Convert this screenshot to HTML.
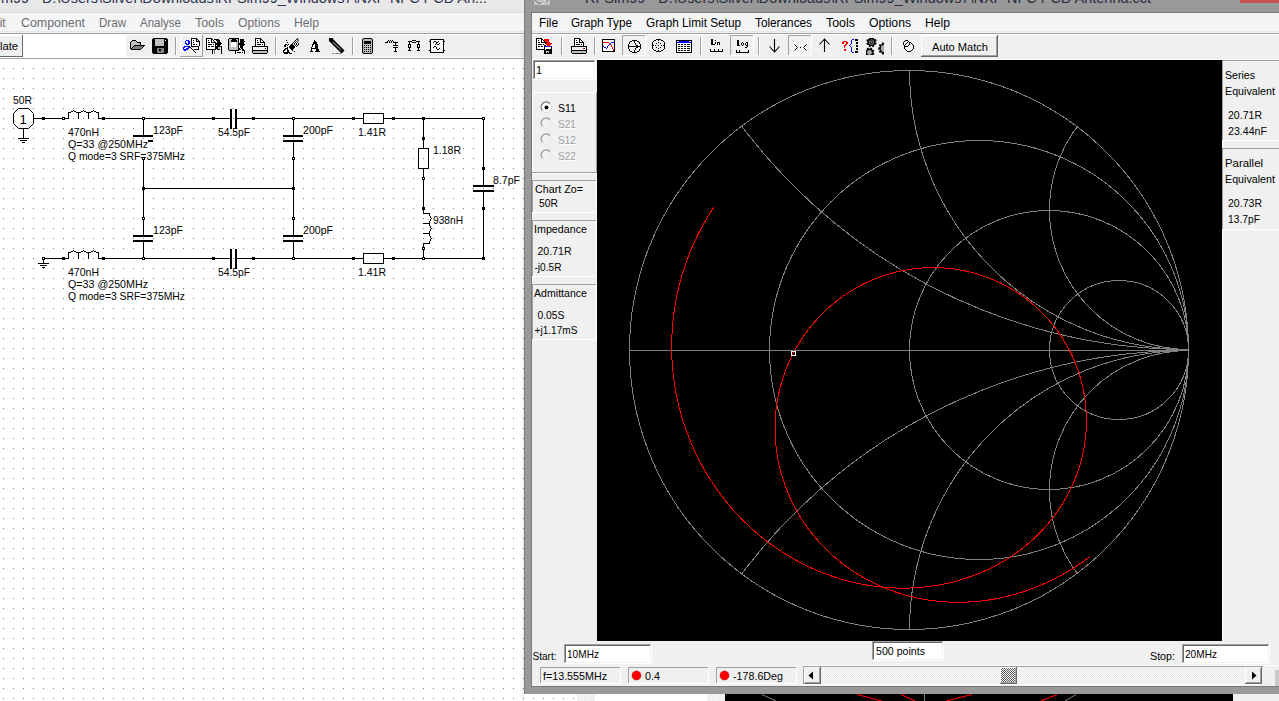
<!DOCTYPE html><html><head><meta charset="utf-8"><style>
html,body{margin:0;padding:0;background:#fff;overflow:hidden;width:1279px;height:701px}
svg{position:absolute;left:0;top:0;font-family:"Liberation Sans",sans-serif}
</style></head><body>
<svg width="1279" height="701" viewBox="0 0 1279 701">
<rect x="0" y="0" width="524" height="12" fill="#e8e8e8" />
<rect x="0" y="12" width="524" height="1" fill="#dcdcdc" />
<rect x="0" y="13" width="524" height="18" fill="#f4f5f7" />
<rect x="0" y="31" width="524" height="1" fill="#e6e6e6" />
<rect x="0" y="32" width="524" height="1" fill="#f0f0f0" />
<rect x="0" y="33" width="524" height="1" fill="#a0a0a0" />
<rect x="0" y="34" width="524" height="24" fill="#ffffff" />
<text x="1" y="3" font-size="15" fill="#2c3650" textLength="486" lengthAdjust="spacingAndGlyphs" >m99  -  D:\Users\Silver\Downloads\RFSim99_Windows7\NXP NFC PCD An...</text>
<text x="21" y="27" font-size="12" fill="#6d6d6d" textLength="64" lengthAdjust="spacingAndGlyphs" >Component</text>
<text x="99" y="27" font-size="12" fill="#6d6d6d" textLength="27" lengthAdjust="spacingAndGlyphs" >Draw</text>
<text x="140" y="27" font-size="12" fill="#6d6d6d" textLength="41" lengthAdjust="spacingAndGlyphs" >Analyse</text>
<text x="195" y="27" font-size="12" fill="#6d6d6d" textLength="29" lengthAdjust="spacingAndGlyphs" >Tools</text>
<text x="238" y="27" font-size="12" fill="#6d6d6d" textLength="42" lengthAdjust="spacingAndGlyphs" >Options</text>
<text x="294" y="27" font-size="12" fill="#6d6d6d" textLength="25" lengthAdjust="spacingAndGlyphs" >Help</text>
<text x="-15" y="27" font-size="12" fill="#6d6d6d" >Edit</text>
<rect x="0" y="35" width="23" height="22" fill="#f0f0f0" />
<rect x="0" y="35" width="23" height="1" fill="#ffffff" />
<rect x="22" y="35" width="1" height="22" fill="#696969" />
<rect x="0" y="56" width="23" height="1" fill="#696969" />
<text x="0" y="50" font-size="11" fill="#000" textLength="18" lengthAdjust="spacingAndGlyphs" >late</text>
<rect x="126" y="35" width="398" height="22" fill="#f0f0f0" />
<rect x="0" y="58" width="524" height="1" fill="#a0a0a0" />
<rect x="0" y="59" width="524" height="642" fill="#ffffff" />
<defs><pattern id="dots" x="3" y="8" width="10" height="10" patternUnits="userSpaceOnUse"><rect width="1" height="1" fill="#777"/></pattern></defs>
<defs><linearGradient id="shd" x1="0" x2="1" y1="0" y2="0"><stop offset="0" stop-color="#000" stop-opacity="0"/><stop offset="1" stop-color="#000" stop-opacity="0.06"/></linearGradient></defs>
<rect x="519" y="34" width="5" height="667" fill="url(#shd)" />
<rect x="0" y="59" width="524" height="642" fill="url(#dots)" />
<rect x="13" y="95" width="20" height="12" fill="#fff"/><rect x="68" y="127" width="32" height="12" fill="#fff"/><rect x="68" y="267" width="32" height="12" fill="#fff"/><rect x="68" y="279" width="81" height="12" fill="#fff"/><rect x="68" y="291" width="118" height="12" fill="#fff"/><rect x="153" y="125" width="31" height="12" fill="#fff"/><rect x="153" y="225" width="31" height="12" fill="#fff"/><rect x="218" y="127" width="33" height="12" fill="#fff"/><rect x="218" y="267" width="33" height="12" fill="#fff"/><rect x="303" y="125" width="31" height="12" fill="#fff"/><rect x="303" y="225" width="31" height="12" fill="#fff"/><rect x="358" y="127" width="29" height="12" fill="#fff"/><rect x="358" y="267" width="29" height="12" fill="#fff"/><rect x="433" y="145" width="29" height="12" fill="#fff"/><rect x="433" y="215" width="31" height="12" fill="#fff"/><rect x="493" y="175" width="28" height="12" fill="#fff"/>
<g fill="none" stroke="#000" stroke-width="1" shape-rendering="crispEdges">
<path d="M33 118.5H68" />
<path d="M98 118.5H230" />
<path d="M237 118.5H363" />
<path d="M383 118.5H484" />
<path d="M43 258.5H68" />
<path d="M98 258.5H230" />
<path d="M237 258.5H363" />
<path d="M383 258.5H484" />
</g>
<g fill="none" stroke="#000" stroke-width="1">
<path d="M18.5 108.5H28.5L33.5 113.5V123.5L28.5 128.5H18.5L13.5 123.5V113.5Z" />
</g>
<g fill="#000"><rect x="83" y="110" width="1" height="1"/><rect x="91" y="111" width="1" height="1"/><rect x="88" y="115" width="1" height="1"/><rect x="90" y="112" width="1" height="1"/><rect x="98" y="113" width="1" height="1"/><rect x="88" y="112" width="1" height="1"/><rect x="68" y="115" width="1" height="1"/><rect x="88" y="118" width="1" height="1"/><rect x="98" y="116" width="1" height="1"/><rect x="68" y="112" width="1" height="1"/><rect x="71" y="111" width="1" height="1"/><rect x="82" y="111" width="1" height="1"/><rect x="79" y="112" width="1" height="1"/><rect x="68" y="118" width="1" height="1"/><rect x="66" y="118" width="1" height="1"/><rect x="99" y="118" width="1" height="1"/><rect x="84" y="111" width="1" height="1"/><rect x="95" y="111" width="1" height="1"/><rect x="101" y="118" width="1" height="1"/><rect x="103" y="118" width="1" height="1"/><rect x="78" y="113" width="1" height="1"/><rect x="78" y="116" width="1" height="1"/><rect x="70" y="112" width="1" height="1"/><rect x="93" y="110" width="1" height="1"/><rect x="96" y="112" width="1" height="1"/><rect x="75" y="111" width="1" height="1"/><rect x="76" y="112" width="1" height="1"/><rect x="98" y="112" width="1" height="1"/><rect x="88" y="117" width="1" height="1"/><rect x="98" y="115" width="1" height="1"/><rect x="88" y="114" width="1" height="1"/><rect x="68" y="117" width="1" height="1"/><rect x="98" y="118" width="1" height="1"/><rect x="65" y="118" width="1" height="1"/><rect x="68" y="114" width="1" height="1"/><rect x="73" y="110" width="1" height="1"/><rect x="81" y="111" width="1" height="1"/><rect x="72" y="111" width="1" height="1"/><rect x="63" y="118" width="1" height="1"/><rect x="87" y="112" width="1" height="1"/><rect x="78" y="115" width="1" height="1"/><rect x="80" y="112" width="1" height="1"/><rect x="89" y="112" width="1" height="1"/><rect x="92" y="111" width="1" height="1"/><rect x="78" y="112" width="1" height="1"/><rect x="78" y="118" width="1" height="1"/><rect x="67" y="118" width="1" height="1"/><rect x="69" y="112" width="1" height="1"/><rect x="94" y="111" width="1" height="1"/><rect x="100" y="118" width="1" height="1"/><rect x="102" y="118" width="1" height="1"/><rect x="85" y="111" width="1" height="1"/><rect x="74" y="111" width="1" height="1"/><rect x="88" y="113" width="1" height="1"/><rect x="98" y="117" width="1" height="1"/><rect x="68" y="113" width="1" height="1"/><rect x="88" y="116" width="1" height="1"/><rect x="98" y="114" width="1" height="1"/><rect x="68" y="116" width="1" height="1"/><rect x="86" y="112" width="1" height="1"/><rect x="97" y="112" width="1" height="1"/><rect x="77" y="112" width="1" height="1"/><rect x="64" y="118" width="1" height="1"/><rect x="78" y="117" width="1" height="1"/><rect x="78" y="114" width="1" height="1"/></g>
<g fill="#000"><rect x="83" y="250" width="1" height="1"/><rect x="91" y="251" width="1" height="1"/><rect x="88" y="255" width="1" height="1"/><rect x="90" y="252" width="1" height="1"/><rect x="98" y="253" width="1" height="1"/><rect x="88" y="252" width="1" height="1"/><rect x="68" y="255" width="1" height="1"/><rect x="88" y="258" width="1" height="1"/><rect x="98" y="256" width="1" height="1"/><rect x="68" y="252" width="1" height="1"/><rect x="71" y="251" width="1" height="1"/><rect x="82" y="251" width="1" height="1"/><rect x="79" y="252" width="1" height="1"/><rect x="68" y="258" width="1" height="1"/><rect x="66" y="258" width="1" height="1"/><rect x="99" y="258" width="1" height="1"/><rect x="84" y="251" width="1" height="1"/><rect x="95" y="251" width="1" height="1"/><rect x="101" y="258" width="1" height="1"/><rect x="103" y="258" width="1" height="1"/><rect x="78" y="253" width="1" height="1"/><rect x="78" y="256" width="1" height="1"/><rect x="70" y="252" width="1" height="1"/><rect x="93" y="250" width="1" height="1"/><rect x="96" y="252" width="1" height="1"/><rect x="75" y="251" width="1" height="1"/><rect x="76" y="252" width="1" height="1"/><rect x="98" y="252" width="1" height="1"/><rect x="88" y="257" width="1" height="1"/><rect x="98" y="255" width="1" height="1"/><rect x="88" y="254" width="1" height="1"/><rect x="68" y="257" width="1" height="1"/><rect x="98" y="258" width="1" height="1"/><rect x="65" y="258" width="1" height="1"/><rect x="68" y="254" width="1" height="1"/><rect x="73" y="250" width="1" height="1"/><rect x="81" y="251" width="1" height="1"/><rect x="72" y="251" width="1" height="1"/><rect x="63" y="258" width="1" height="1"/><rect x="87" y="252" width="1" height="1"/><rect x="78" y="255" width="1" height="1"/><rect x="80" y="252" width="1" height="1"/><rect x="89" y="252" width="1" height="1"/><rect x="92" y="251" width="1" height="1"/><rect x="78" y="252" width="1" height="1"/><rect x="78" y="258" width="1" height="1"/><rect x="67" y="258" width="1" height="1"/><rect x="69" y="252" width="1" height="1"/><rect x="94" y="251" width="1" height="1"/><rect x="100" y="258" width="1" height="1"/><rect x="102" y="258" width="1" height="1"/><rect x="85" y="251" width="1" height="1"/><rect x="74" y="251" width="1" height="1"/><rect x="88" y="253" width="1" height="1"/><rect x="98" y="257" width="1" height="1"/><rect x="68" y="253" width="1" height="1"/><rect x="88" y="256" width="1" height="1"/><rect x="98" y="254" width="1" height="1"/><rect x="68" y="256" width="1" height="1"/><rect x="86" y="252" width="1" height="1"/><rect x="97" y="252" width="1" height="1"/><rect x="77" y="252" width="1" height="1"/><rect x="64" y="258" width="1" height="1"/><rect x="78" y="257" width="1" height="1"/><rect x="78" y="254" width="1" height="1"/></g>
<g fill="#000"><rect x="431" y="228" width="1" height="1"/><rect x="430" y="236" width="1" height="1"/><rect x="426" y="233" width="1" height="1"/><rect x="429" y="235" width="1" height="1"/><rect x="428" y="243" width="1" height="1"/><rect x="429" y="233" width="1" height="1"/><rect x="426" y="213" width="1" height="1"/><rect x="423" y="233" width="1" height="1"/><rect x="425" y="243" width="1" height="1"/><rect x="429" y="213" width="1" height="1"/><rect x="430" y="216" width="1" height="1"/><rect x="430" y="227" width="1" height="1"/><rect x="429" y="224" width="1" height="1"/><rect x="423" y="213" width="1" height="1"/><rect x="423" y="211" width="1" height="1"/><rect x="423" y="244" width="1" height="1"/><rect x="430" y="229" width="1" height="1"/><rect x="430" y="240" width="1" height="1"/><rect x="423" y="246" width="1" height="1"/><rect x="423" y="248" width="1" height="1"/><rect x="428" y="223" width="1" height="1"/><rect x="425" y="223" width="1" height="1"/><rect x="429" y="215" width="1" height="1"/><rect x="431" y="238" width="1" height="1"/><rect x="429" y="241" width="1" height="1"/><rect x="430" y="220" width="1" height="1"/><rect x="429" y="221" width="1" height="1"/><rect x="429" y="243" width="1" height="1"/><rect x="424" y="233" width="1" height="1"/><rect x="426" y="243" width="1" height="1"/><rect x="427" y="233" width="1" height="1"/><rect x="424" y="213" width="1" height="1"/><rect x="423" y="243" width="1" height="1"/><rect x="423" y="210" width="1" height="1"/><rect x="427" y="213" width="1" height="1"/><rect x="431" y="218" width="1" height="1"/><rect x="430" y="226" width="1" height="1"/><rect x="430" y="217" width="1" height="1"/><rect x="423" y="208" width="1" height="1"/><rect x="429" y="232" width="1" height="1"/><rect x="426" y="223" width="1" height="1"/><rect x="429" y="225" width="1" height="1"/><rect x="429" y="234" width="1" height="1"/><rect x="430" y="237" width="1" height="1"/><rect x="429" y="223" width="1" height="1"/><rect x="423" y="223" width="1" height="1"/><rect x="423" y="212" width="1" height="1"/><rect x="429" y="214" width="1" height="1"/><rect x="430" y="239" width="1" height="1"/><rect x="423" y="245" width="1" height="1"/><rect x="423" y="247" width="1" height="1"/><rect x="430" y="230" width="1" height="1"/><rect x="430" y="219" width="1" height="1"/><rect x="428" y="233" width="1" height="1"/><rect x="424" y="243" width="1" height="1"/><rect x="428" y="213" width="1" height="1"/><rect x="425" y="233" width="1" height="1"/><rect x="427" y="243" width="1" height="1"/><rect x="425" y="213" width="1" height="1"/><rect x="429" y="231" width="1" height="1"/><rect x="429" y="242" width="1" height="1"/><rect x="429" y="222" width="1" height="1"/><rect x="423" y="209" width="1" height="1"/><rect x="424" y="223" width="1" height="1"/><rect x="427" y="223" width="1" height="1"/></g>
<g fill="none" stroke="#000" stroke-width="1">
</g>
<g fill="none" stroke="#000" stroke-width="1" shape-rendering="crispEdges">
<path d="M23.5 128V138" />
<path d="M18 138.5H29" />
<path d="M20 140.5H27" />
<path d="M22 142.5H25" />
<path d="M43.5 258V263" />
<path d="M38 263.5H49" />
<path d="M40 265.5H47" />
<path d="M42 267.5H45" />
<path d="M143.5 118V135" />
<path d="M143.5 142V235" />
<path d="M143.5 242V258" />
<path d="M293.5 118V135" />
<path d="M293.5 142V235" />
<path d="M293.5 242V258" />
<path d="M143 188.5H294" />
<path d="M483.5 118V185" />
<path d="M483.5 192V258" />
<path d="M423.5 118V148" />
<path d="M423.5 168V208" />
<path d="M423.5 248V258" />
<path d="M363.5 113.5H383.5V123.5H363.5Z" />
<path d="M363.5 253.5H383.5V263.5H363.5Z" />
<path d="M418.5 148.5H428.5V168.5H418.5Z" />
</g>
<g fill="#000">
<rect x="133" y="135" width="20" height="2" fill="#000" />
<rect x="133" y="140" width="20" height="2" fill="#000" />
<rect x="133" y="235" width="20" height="2" fill="#000" />
<rect x="133" y="240" width="20" height="2" fill="#000" />
<rect x="283" y="135" width="20" height="2" fill="#000" />
<rect x="283" y="140" width="20" height="2" fill="#000" />
<rect x="283" y="235" width="20" height="2" fill="#000" />
<rect x="283" y="240" width="20" height="2" fill="#000" />
<rect x="473" y="185" width="21" height="2" fill="#000" />
<rect x="473" y="190" width="21" height="2" fill="#000" />
<rect x="230" y="109" width="2" height="20" fill="#000" />
<rect x="235" y="109" width="2" height="20" fill="#000" />
<rect x="230" y="249" width="2" height="20" fill="#000" />
<rect x="235" y="249" width="2" height="20" fill="#000" />
</g>
<rect x="42" y="117" width="3" height="3" fill="#000" />
<rect x="102" y="117" width="3" height="3" fill="#000" />
<rect x="212" y="117" width="3" height="3" fill="#000" />
<rect x="252" y="117" width="3" height="3" fill="#000" />
<rect x="352" y="117" width="3" height="3" fill="#000" />
<rect x="392" y="117" width="3" height="3" fill="#000" />
<rect x="422" y="117" width="3" height="3" fill="#000" />
<rect x="422" y="137" width="3" height="3" fill="#000" />
<rect x="482" y="167" width="3" height="3" fill="#000" />
<rect x="142" y="187" width="3" height="3" fill="#000" />
<rect x="292" y="187" width="3" height="3" fill="#000" />
<rect x="62" y="257" width="3" height="3" fill="#000" />
<rect x="102" y="257" width="3" height="3" fill="#000" />
<rect x="212" y="257" width="3" height="3" fill="#000" />
<rect x="252" y="257" width="3" height="3" fill="#000" />
<rect x="352" y="257" width="3" height="3" fill="#000" />
<rect x="392" y="257" width="3" height="3" fill="#000" />
<rect x="482" y="257" width="3" height="3" fill="#000" />
<rect x="482" y="207" width="3" height="3" fill="#000" />
<rect x="422" y="207" width="3" height="3" fill="#000" />
<rect x="62.5" y="117.5" width="2" height="2" fill="#fff" stroke="#000" stroke-width="1" shape-rendering="crispEdges"/>
<rect x="142.5" y="117.5" width="2" height="2" fill="#fff" stroke="#000" stroke-width="1" shape-rendering="crispEdges"/>
<rect x="292.5" y="117.5" width="2" height="2" fill="#fff" stroke="#000" stroke-width="1" shape-rendering="crispEdges"/>
<rect x="482.5" y="117.5" width="2" height="2" fill="#fff" stroke="#000" stroke-width="1" shape-rendering="crispEdges"/>
<rect x="142.5" y="157.5" width="2" height="2" fill="#fff" stroke="#000" stroke-width="1" shape-rendering="crispEdges"/>
<rect x="292.5" y="157.5" width="2" height="2" fill="#fff" stroke="#000" stroke-width="1" shape-rendering="crispEdges"/>
<rect x="422.5" y="177.5" width="2" height="2" fill="#fff" stroke="#000" stroke-width="1" shape-rendering="crispEdges"/>
<rect x="142.5" y="217.5" width="2" height="2" fill="#fff" stroke="#000" stroke-width="1" shape-rendering="crispEdges"/>
<rect x="292.5" y="217.5" width="2" height="2" fill="#fff" stroke="#000" stroke-width="1" shape-rendering="crispEdges"/>
<rect x="42.5" y="257.5" width="2" height="2" fill="#fff" stroke="#000" stroke-width="1" shape-rendering="crispEdges"/>
<rect x="142.5" y="257.5" width="2" height="2" fill="#fff" stroke="#000" stroke-width="1" shape-rendering="crispEdges"/>
<rect x="292.5" y="257.5" width="2" height="2" fill="#fff" stroke="#000" stroke-width="1" shape-rendering="crispEdges"/>
<rect x="422.5" y="257.5" width="2" height="2" fill="#fff" stroke="#000" stroke-width="1" shape-rendering="crispEdges"/>
<rect x="422.5" y="247.5" width="2" height="2" fill="#fff" stroke="#000" stroke-width="1" shape-rendering="crispEdges"/>
<text x="13" y="104" font-size="11" fill="#000" textLength="19" lengthAdjust="spacingAndGlyphs" >50R</text>
<text x="23" y="123.5" font-size="13" fill="#000" text-anchor="middle" >1</text>
<text x="68" y="136" font-size="11" fill="#000" textLength="31" lengthAdjust="spacingAndGlyphs" >470nH</text>
<rect x="68" y="139" width="80" height="12" fill="#fff" />
<text x="68" y="148" font-size="11" fill="#000" textLength="80" lengthAdjust="spacingAndGlyphs" >Q=33 @250MHz</text>
<rect x="68" y="151" width="117" height="12" fill="#fff" />
<text x="68" y="160" font-size="11" fill="#000" textLength="117" lengthAdjust="spacingAndGlyphs" >Q mode=3 SRF=375MHz</text>
<text x="68" y="276" font-size="11" fill="#000" textLength="31" lengthAdjust="spacingAndGlyphs" >470nH</text>
<text x="68" y="288" font-size="11" fill="#000" textLength="80" lengthAdjust="spacingAndGlyphs" >Q=33 @250MHz</text>
<text x="68" y="300" font-size="11" fill="#000" textLength="117" lengthAdjust="spacingAndGlyphs" >Q mode=3 SRF=375MHz</text>
<text x="153" y="134" font-size="11" fill="#000" textLength="30" lengthAdjust="spacingAndGlyphs" >123pF</text>
<text x="153" y="234" font-size="11" fill="#000" textLength="30" lengthAdjust="spacingAndGlyphs" >123pF</text>
<text x="218" y="136" font-size="11" fill="#000" textLength="32" lengthAdjust="spacingAndGlyphs" >54.5pF</text>
<text x="218" y="276" font-size="11" fill="#000" textLength="32" lengthAdjust="spacingAndGlyphs" >54.5pF</text>
<text x="303" y="134" font-size="11" fill="#000" textLength="30" lengthAdjust="spacingAndGlyphs" >200pF</text>
<text x="303" y="234" font-size="11" fill="#000" textLength="30" lengthAdjust="spacingAndGlyphs" >200pF</text>
<text x="358" y="136" font-size="11" fill="#000" textLength="28" lengthAdjust="spacingAndGlyphs" >1.41R</text>
<text x="358" y="276" font-size="11" fill="#000" textLength="28" lengthAdjust="spacingAndGlyphs" >1.41R</text>
<text x="433" y="154" font-size="11" fill="#000" textLength="28" lengthAdjust="spacingAndGlyphs" >1.18R</text>
<text x="433" y="224" font-size="11" fill="#000" textLength="30" lengthAdjust="spacingAndGlyphs" >938nH</text>
<text x="493" y="184" font-size="11" fill="#000" textLength="27" lengthAdjust="spacingAndGlyphs" >8.7pF</text>
<rect x="148" y="140" width="5" height="2" fill="#000" />
<rect x="143" y="159" width="1" height="29" fill="#000" />
<rect x="142.5" y="157.5" width="2" height="2" fill="#fff" stroke="#000" stroke-width="1" shape-rendering="crispEdges"/>
<rect x="524" y="0" width="755" height="694" fill="#999999" />
<rect x="524" y="0" width="1" height="694" fill="#7a7a7a" />
<rect x="531" y="12" width="1" height="674" fill="#7a7a7a" />
<rect x="531" y="686" width="748" height="1" fill="#7a7a7a" />
<rect x="524" y="694" width="755" height="0" fill="#999" />
<text x="585" y="3" font-size="15" fill="#262e40" textLength="566" lengthAdjust="spacingAndGlyphs" >RFSim99  -  D:\Users\Silver\Downloads\RFSim99_Windows7\NXP NFC PCD Antenna.cct</text>
<rect x="534" y="0" width="16" height="5" fill="#c4c4c4" />
<path d="M535 0Q538 4 541 3.5Q545 3 548 0" fill="none" stroke="#6a6a6a" stroke-width="1"/><path d="M541 4Q544 4 546 0" fill="none" stroke="#fff" stroke-width="1"/>
<rect x="1240" y="0" width="39" height="3" fill="#c75050" />
<rect x="532" y="12" width="747" height="19" fill="#f4f5f7" />
<rect x="531" y="12" width="748" height="1" fill="#7a7a7a" />
<rect x="532" y="31" width="747" height="1" fill="#e6e6e6" />
<rect x="532" y="32" width="747" height="1" fill="#f0f0f0" />
<rect x="532" y="33" width="747" height="1" fill="#a0a0a0" />
<text x="539" y="27" font-size="12" fill="#000" textLength="19" lengthAdjust="spacingAndGlyphs" >File</text>
<text x="571" y="27" font-size="12" fill="#000" textLength="61" lengthAdjust="spacingAndGlyphs" >Graph Type</text>
<text x="646" y="27" font-size="12" fill="#000" textLength="95" lengthAdjust="spacingAndGlyphs" >Graph Limit Setup</text>
<text x="755" y="27" font-size="12" fill="#000" textLength="57" lengthAdjust="spacingAndGlyphs" >Tolerances</text>
<text x="826" y="27" font-size="12" fill="#000" textLength="29" lengthAdjust="spacingAndGlyphs" >Tools</text>
<text x="869" y="27" font-size="12" fill="#000" textLength="42" lengthAdjust="spacingAndGlyphs" >Options</text>
<text x="925" y="27" font-size="12" fill="#000" textLength="25" lengthAdjust="spacingAndGlyphs" >Help</text>
<rect x="532" y="34" width="747" height="25" fill="#f0f0f0" />
<rect x="532" y="34" width="747" height="1" fill="#ffffff" />
<rect x="532" y="59" width="747" height="1" fill="#ffffff" />
<rect x="532" y="60" width="747" height="626" fill="#f0f0f0" />
<rect x="597" y="60" width="625" height="581" fill="#000" />
<defs><clipPath id="uc"><circle cx="909.0" cy="350.0" r="280.1"/></clipPath><clipPath id="ch"><rect x="597" y="60" width="625" height="581"/></clipPath></defs>
<g clip-path="url(#ch)">
<g fill="none" stroke="#808080" stroke-width="1" shape-rendering="crispEdges">
<circle cx="909" cy="350" r="279.5"/>
<path d="M629 350.5H1189" shape-rendering="crispEdges"/>
<circle cx="979" cy="350" r="209.5"/>
<circle cx="1049" cy="350" r="139.5"/>
<circle cx="1119" cy="350" r="69.5"/>
<g clip-path="url(#uc)">
<circle cx="1189" cy="-210" r="559.5"/>
<circle cx="1189" cy="910" r="559.5"/>
<circle cx="1189" cy="70" r="279.5"/>
<circle cx="1189" cy="630" r="279.5"/>
<circle cx="1189" cy="210" r="139.5"/>
<circle cx="1189" cy="490" r="139.5"/>
</g></g>
<polyline points="1089.32,557.04 1088.51,557.65 1087.69,558.26 1086.87,558.86 1086.04,559.47 1085.20,560.08 1084.35,560.69 1083.49,561.30 1082.63,561.91 1081.75,562.52 1080.87,563.13 1079.98,563.74 1079.08,564.34 1078.18,564.95 1077.26,565.56 1076.34,566.17 1075.40,566.77 1074.46,567.38 1073.51,567.99 1072.55,568.59 1071.58,569.20 1070.59,569.80 1069.60,570.40 1068.60,571.01 1067.59,571.61 1066.57,572.21 1065.54,572.81 1064.50,573.40 1063.45,574.00 1062.39,574.60 1061.32,575.19 1060.23,575.78 1059.14,576.37 1058.03,576.96 1056.91,577.55 1055.79,578.13 1054.64,578.72 1053.49,579.30 1052.33,579.88 1051.15,580.45 1049.96,581.03 1048.76,581.60 1047.54,582.17 1046.32,582.73 1045.08,583.29 1043.82,583.85 1042.55,584.41 1041.27,584.96 1039.98,585.51 1038.67,586.05 1037.35,586.60 1036.01,587.13 1034.66,587.66 1033.29,588.19 1031.91,588.71 1030.51,589.23 1029.10,589.75 1027.67,590.25 1026.23,590.75 1024.76,591.25 1023.29,591.74 1021.79,592.22 1020.28,592.70 1018.76,593.17 1017.21,593.63 1015.65,594.09 1014.07,594.54 1012.47,594.98 1010.85,595.41 1009.22,595.83 1007.56,596.24 1005.89,596.65 1004.20,597.04 1002.48,597.42 1000.75,597.80 999.00,598.16 997.22,598.51 995.43,598.85 993.61,599.17 991.78,599.49 989.92,599.79 988.04,600.07 986.14,600.34 984.21,600.60 982.26,600.84 980.29,601.06 978.29,601.27 976.28,601.46 974.23,601.64 972.16,601.79 970.07,601.92 967.96,602.04 965.81,602.13 963.64,602.20 961.45,602.25 959.23,602.27 956.98,602.27 954.71,602.24 952.41,602.19 950.08,602.11 947.73,602.00 945.35,601.86 942.94,601.69 940.50,601.49 938.03,601.25 935.54,600.98 933.01,600.68 930.46,600.33 927.88,599.95 925.27,599.53 922.63,599.06 919.96,598.55 917.27,598.00 914.54,597.40 911.79,596.75 909.00,596.05 906.19,595.30 903.35,594.49 900.48,593.63 897.59,592.71 894.67,591.73 891.72,590.68 888.75,589.57 885.75,588.39 882.73,587.14 879.68,585.81 876.61,584.41 873.52,582.93 870.41,581.37 867.29,579.72 864.14,577.99 860.98,576.17 857.81,574.25 854.63,572.23 851.43,570.12 848.24,567.90 845.04,565.57 841.84,563.14 838.64,560.59 835.45,557.92 832.27,555.13 829.10,552.22 825.95,549.17 822.83,546.00 819.74,542.69 816.68,539.25 813.66,535.66 810.69,531.93 807.77,528.05 804.92,524.02 802.13,519.83 799.43,515.50 796.81,511.00 794.28,506.35 791.86,501.54 789.55,496.57 787.37,491.44 785.32,486.15 783.42,480.71 781.69,475.11 780.12,469.35 778.74,463.45 777.55,457.40 776.58,451.21 775.83,444.89 775.31,438.44 775.04,431.88 775.04,425.22 775.31,418.46 775.87,411.62 776.72,404.71 777.89,397.75 779.38,390.76 781.20,383.75 783.35,376.74 785.85,369.76 788.70,362.82 791.91,355.96 795.47,349.18 799.38,342.52 803.65,336.00 808.27,329.65 813.23,323.49 818.52,317.54 824.14,311.83 830.07,306.39 836.29,301.23 842.79,296.38 849.55,291.86 856.55,287.69 863.75,283.87 871.15,280.44 878.71,277.40 886.41,274.76 894.22,272.52 902.11,270.70 910.05,269.30 918.01,268.31 925.98,267.74 933.91,267.58 941.79,267.82 949.58,268.45 957.28,269.47 964.84,270.86 972.25,272.61 979.50,274.70 986.56,277.11 993.43,279.83 1000.07,282.84 1006.49,286.13 1012.67,289.66 1018.61,293.43 1024.29,297.42 1029.71,301.60 1034.87,305.95 1039.76,310.47 1044.39,315.12 1048.75,319.90 1052.85,324.79 1056.68,329.77 1060.25,334.83 1063.56,339.95 1066.63,345.12 1069.44,350.32 1072.01,355.56 1074.35,360.80 1076.46,366.05 1078.34,371.30 1080.01,376.53 1081.46,381.74 1082.72,386.92 1083.78,392.07 1084.65,397.17 1085.34,402.23 1085.85,407.24 1086.20,412.19 1086.39,417.08 1086.42,421.91 1086.30,426.67 1086.04,431.36 1085.65,435.99 1085.12,440.54 1084.47,445.01 1083.70,449.41 1082.82,453.74 1081.83,457.98 1080.74,462.15 1079.54,466.24 1078.25,470.25 1076.88,474.18 1075.41,478.04 1073.87,481.81 1072.24,485.51 1070.55,489.13 1068.78,492.66 1066.94,496.13 1065.04,499.51 1063.08,502.82 1061.06,506.05 1058.98,509.21 1056.85,512.30 1054.67,515.31 1052.44,518.24 1050.16,521.11 1047.84,523.91 1045.48,526.63 1043.08,529.28 1040.64,531.87 1038.16,534.39 1035.65,536.84 1033.11,539.22 1030.53,541.54 1027.93,543.80 1025.29,545.99 1022.63,548.12 1019.95,550.18 1017.23,552.18 1014.50,554.12 1011.74,556.00 1008.96,557.83 1006.16,559.59 1003.35,561.29 1000.51,562.94 997.65,564.53 994.78,566.06 991.90,567.54 989.00,568.96 986.08,570.32 983.15,571.64 980.21,572.89 977.26,574.10 974.30,575.25 971.32,576.35 968.34,577.40 965.35,578.40 962.34,579.34 959.34,580.24 956.32,581.08 953.30,581.88 950.27,582.62 947.23,583.32 944.19,583.97 941.15,584.57 938.10,585.12 935.05,585.63 931.99,586.08 928.94,586.49 925.88,586.86 922.82,587.18 919.75,587.45 916.69,587.67 913.63,587.85 910.57,587.99 907.51,588.08 904.45,588.12 901.40,588.12 898.34,588.08 895.29,587.99 892.24,587.86 889.20,587.69 886.16,587.47 883.13,587.21 880.10,586.90 877.07,586.56 874.06,586.17 871.05,585.74 868.04,585.27 865.05,584.75 862.06,584.20 859.08,583.60 856.11,582.96 853.15,582.28 850.20,581.56 847.26,580.81 844.33,580.01 841.41,579.17 838.50,578.29 835.61,577.37 832.72,576.42 829.85,575.42 827.00,574.39 824.16,573.31 821.33,572.20 818.52,571.06 815.72,569.87 812.94,568.65 810.18,567.39 807.43,566.09 804.70,564.76 801.99,563.39 799.30,561.99 796.62,560.55 793.96,559.08 791.33,557.57 788.71,556.03 786.11,554.45 783.54,552.84 780.98,551.19 778.45,549.52 775.94,547.81 773.45,546.06 770.99,544.29 768.54,542.48 766.13,540.65 763.73,538.78 761.36,536.88 759.02,534.96 756.70,533.00 754.41,531.01 752.14,529.00 749.90,526.95 747.68,524.88 745.50,522.78 743.34,520.66 741.21,518.51 739.10,516.33 737.03,514.13 734.98,511.90 732.96,509.65 730.98,507.37 729.02,505.07 727.09,502.75 725.20,500.40 723.33,498.03 721.49,495.64 719.69,493.23 717.92,490.80 716.18,488.35 714.47,485.88 712.79,483.39 711.14,480.88 709.53,478.36 707.95,475.81 706.40,473.26 704.89,470.68 703.41,468.09 701.96,465.48 700.55,462.86 699.17,460.23 697.82,457.58 696.51,454.92 695.23,452.24 693.98,449.56 692.77,446.86 691.60,444.15 690.45,441.44 689.34,438.71 688.27,435.97 687.23,433.23 686.23,430.48 685.25,427.72 684.32,424.95 683.41,422.18 682.55,419.40 681.71,416.62 680.91,413.83 680.15,411.04 679.42,408.24 678.72,405.44 678.05,402.64 677.42,399.84 676.83,397.04 676.26,394.23 675.73,391.43 675.24,388.62 674.78,385.82 674.35,383.01 673.95,380.21 673.58,377.41 673.25,374.62 672.95,371.82 672.69,369.03 672.45,366.25 672.25,363.47 672.07,360.69 671.93,357.92 671.82,355.15 671.74,352.39 671.69,349.64 671.68,346.90 671.69,344.16 671.73,341.43 671.80,338.71 671.90,336.00 672.03,333.29 672.19,330.60 672.37,327.92 672.59,325.24 672.83,322.58 673.10,319.93 673.39,317.29 673.72,314.66 674.07,312.04 674.44,309.44 674.85,306.84 675.27,304.26 675.73,301.70 676.20,299.14 676.71,296.60 677.23,294.08 677.78,291.57 678.36,289.07 678.96,286.59 679.58,284.12 680.22,281.67 680.88,279.23 681.57,276.81 682.28,274.40 683.01,272.01 683.76,269.64 684.53,267.28 685.32,264.94 686.13,262.62 686.96,260.31 687.81,258.02 688.67,255.75 689.56,253.49 690.46,251.25 691.38,249.03 692.32,246.83 693.28,244.65 694.25,242.48 695.24,240.33 696.24,238.20 697.26,236.08 698.29,233.99 699.34,231.91 700.41,229.85 701.49,227.81 702.58,225.79 703.68,223.79 704.80,221.80 705.94,219.83 707.08,217.89 708.24,215.96 709.40,214.05 710.58,212.15 711.78,210.28 712.98,208.42 714.19,206.59" fill="none" stroke="#ff0000" stroke-width="1" shape-rendering="crispEdges"/>
<rect x="791.5" y="351.5" width="4" height="4" fill="none" stroke="#fff" stroke-width="1" shape-rendering="crispEdges"/>
</g>
<rect x="533" y="60" width="63" height="20" fill="#fff" />
<rect x="533" y="60" width="63" height="1" fill="#a0a0a0" />
<rect x="533" y="60" width="1" height="20" fill="#a0a0a0" />
<rect x="534" y="61" width="61" height="1" fill="#696969" />
<rect x="534" y="61" width="1" height="18" fill="#696969" />
<rect x="533" y="79" width="63" height="1" fill="#ffffff" />
<rect x="595" y="60" width="1" height="20" fill="#ffffff" />
<rect x="534" y="78" width="61" height="1" fill="#f0f0f0" />
<rect x="594" y="61" width="1" height="18" fill="#f0f0f0" />
<text x="536" y="74" font-size="11" fill="#000" >1</text>
<rect x="532" y="92" width="65" height="1" fill="#ffffff" />
<rect x="532" y="92" width="1" height="81" fill="#ffffff" />
<rect x="532" y="172" width="65" height="1" fill="#a0a0a0" />
<rect x="596" y="92" width="1" height="81" fill="#a0a0a0" />
<rect x="532" y="173" width="65" height="1" fill="#ffffff" />
<circle cx="546.5" cy="107.5" r="5" fill="#fff" stroke="#dcdcdc" stroke-width="1"/>
<path d="M542.5 110.5A5 5 0 0 1 550 103.5" fill="none" stroke="#808080" stroke-width="1.2"/>
<circle cx="546.5" cy="107.5" r="2" fill="#000"/>
<text x="558" y="112" font-size="11" fill="#000" textLength="18" lengthAdjust="spacingAndGlyphs" >S11</text>
<circle cx="546.5" cy="123.5" r="5" fill="#f0f0f0" stroke="#e8e8e8" stroke-width="1"/>
<path d="M542.5 126.5A5 5 0 0 1 550 119.5" fill="none" stroke="#9a9a9a" stroke-width="1.2"/>
<text x="559" y="129" font-size="11" fill="#ffffff" textLength="18" lengthAdjust="spacingAndGlyphs" >S21</text>
<text x="558" y="128" font-size="11" fill="#a0a0a0" textLength="18" lengthAdjust="spacingAndGlyphs" >S21</text>
<circle cx="546.5" cy="139.5" r="5" fill="#f0f0f0" stroke="#e8e8e8" stroke-width="1"/>
<path d="M542.5 142.5A5 5 0 0 1 550 135.5" fill="none" stroke="#9a9a9a" stroke-width="1.2"/>
<text x="559" y="145" font-size="11" fill="#ffffff" textLength="18" lengthAdjust="spacingAndGlyphs" >S12</text>
<text x="558" y="144" font-size="11" fill="#a0a0a0" textLength="18" lengthAdjust="spacingAndGlyphs" >S12</text>
<circle cx="546.5" cy="155.5" r="5" fill="#f0f0f0" stroke="#e8e8e8" stroke-width="1"/>
<path d="M542.5 158.5A5 5 0 0 1 550 151.5" fill="none" stroke="#9a9a9a" stroke-width="1.2"/>
<text x="559" y="161" font-size="11" fill="#ffffff" textLength="18" lengthAdjust="spacingAndGlyphs" >S22</text>
<text x="558" y="160" font-size="11" fill="#a0a0a0" textLength="18" lengthAdjust="spacingAndGlyphs" >S22</text>
<rect x="532" y="180" width="65" height="1" fill="#a0a0a0" />
<rect x="532" y="180" width="1" height="33" fill="#a0a0a0" />
<rect x="532" y="212" width="65" height="1" fill="#ffffff" />
<rect x="596" y="180" width="1" height="33" fill="#ffffff" />
<text x="535" y="193" font-size="11" fill="#000" textLength="48" lengthAdjust="spacingAndGlyphs" >Chart Zo=</text>
<text x="539" y="207" font-size="11" fill="#000" textLength="19" lengthAdjust="spacingAndGlyphs" >50R</text>
<rect x="532" y="220" width="65" height="1" fill="#a0a0a0" />
<rect x="532" y="220" width="1" height="57" fill="#a0a0a0" />
<rect x="532" y="276" width="65" height="1" fill="#ffffff" />
<rect x="596" y="220" width="1" height="57" fill="#ffffff" />
<text x="534" y="233" font-size="11" fill="#000" textLength="53" lengthAdjust="spacingAndGlyphs" >Impedance</text>
<text x="537.5" y="255" font-size="11" fill="#000" textLength="34" lengthAdjust="spacingAndGlyphs" >20.71R</text>
<text x="534.5" y="271" font-size="11" fill="#000" textLength="27" lengthAdjust="spacingAndGlyphs" >-j0.5R</text>
<rect x="532" y="284" width="65" height="1" fill="#a0a0a0" />
<rect x="532" y="284" width="1" height="56" fill="#a0a0a0" />
<rect x="532" y="339" width="65" height="1" fill="#ffffff" />
<rect x="596" y="284" width="1" height="56" fill="#ffffff" />
<text x="534" y="297" font-size="11" fill="#000" textLength="53" lengthAdjust="spacingAndGlyphs" >Admittance</text>
<text x="537.5" y="318.5" font-size="11" fill="#000" textLength="27" lengthAdjust="spacingAndGlyphs" >0.05S</text>
<text x="534.5" y="334" font-size="11" fill="#000" textLength="43" lengthAdjust="spacingAndGlyphs" >+j1.17mS</text>
<rect x="1222" y="60" width="1" height="580" fill="#ffffff" />
<rect x="1222" y="60" width="58" height="1" fill="#a0a0a0" />
<rect x="1222" y="60" width="1" height="81" fill="#a0a0a0" />
<rect x="1222" y="140" width="58" height="1" fill="#ffffff" />
<rect x="1279" y="60" width="1" height="81" fill="#ffffff" />
<text x="1225" y="79" font-size="11" fill="#000" textLength="30" lengthAdjust="spacingAndGlyphs" >Series</text>
<text x="1225" y="95" font-size="11" fill="#000" textLength="50" lengthAdjust="spacingAndGlyphs" >Equivalent</text>
<text x="1228" y="119" font-size="11" fill="#000" textLength="34" lengthAdjust="spacingAndGlyphs" >20.71R</text>
<text x="1228" y="135" font-size="11" fill="#000" textLength="39" lengthAdjust="spacingAndGlyphs" >23.44nF</text>
<rect x="1222" y="148" width="58" height="1" fill="#a0a0a0" />
<rect x="1222" y="148" width="1" height="82" fill="#a0a0a0" />
<rect x="1222" y="229" width="58" height="1" fill="#ffffff" />
<rect x="1279" y="148" width="1" height="82" fill="#ffffff" />
<text x="1225" y="167" font-size="11" fill="#000" textLength="38" lengthAdjust="spacingAndGlyphs" >Parallel</text>
<text x="1225" y="183" font-size="11" fill="#000" textLength="50" lengthAdjust="spacingAndGlyphs" >Equivalent</text>
<text x="1228" y="207" font-size="11" fill="#000" textLength="34" lengthAdjust="spacingAndGlyphs" >20.73R</text>
<text x="1228" y="223" font-size="11" fill="#000" textLength="32" lengthAdjust="spacingAndGlyphs" >13.7pF</text>
<text x="532.5" y="660" font-size="11" fill="#000" textLength="24" lengthAdjust="spacingAndGlyphs" >Start:</text>
<rect x="564" y="644" width="88" height="20" fill="#fff" />
<rect x="564" y="644" width="88" height="1" fill="#a0a0a0" />
<rect x="564" y="644" width="1" height="20" fill="#a0a0a0" />
<rect x="565" y="645" width="86" height="1" fill="#696969" />
<rect x="565" y="645" width="1" height="18" fill="#696969" />
<rect x="564" y="663" width="88" height="1" fill="#ffffff" />
<rect x="651" y="644" width="1" height="20" fill="#ffffff" />
<rect x="565" y="662" width="86" height="1" fill="#f0f0f0" />
<rect x="650" y="645" width="1" height="18" fill="#f0f0f0" />
<text x="567" y="658" font-size="11" fill="#000" textLength="32" lengthAdjust="spacingAndGlyphs" >10MHz</text>
<rect x="872" y="641" width="72" height="20" fill="#fff" />
<rect x="872" y="641" width="72" height="1" fill="#a0a0a0" />
<rect x="872" y="641" width="1" height="20" fill="#a0a0a0" />
<rect x="873" y="642" width="70" height="1" fill="#696969" />
<rect x="873" y="642" width="1" height="18" fill="#696969" />
<rect x="872" y="660" width="72" height="1" fill="#ffffff" />
<rect x="943" y="641" width="1" height="20" fill="#ffffff" />
<rect x="873" y="659" width="70" height="1" fill="#f0f0f0" />
<rect x="942" y="642" width="1" height="18" fill="#f0f0f0" />
<text x="876" y="655" font-size="11" fill="#000" textLength="49" lengthAdjust="spacingAndGlyphs" >500 points</text>
<text x="1150" y="660" font-size="11" fill="#000" textLength="25" lengthAdjust="spacingAndGlyphs" >Stop:</text>
<rect x="1182" y="644" width="88" height="20" fill="#fff" />
<rect x="1182" y="644" width="88" height="1" fill="#a0a0a0" />
<rect x="1182" y="644" width="1" height="20" fill="#a0a0a0" />
<rect x="1183" y="645" width="86" height="1" fill="#696969" />
<rect x="1183" y="645" width="1" height="18" fill="#696969" />
<rect x="1182" y="663" width="88" height="1" fill="#ffffff" />
<rect x="1269" y="644" width="1" height="20" fill="#ffffff" />
<rect x="1183" y="662" width="86" height="1" fill="#f0f0f0" />
<rect x="1268" y="645" width="1" height="18" fill="#f0f0f0" />
<text x="1185" y="658" font-size="11" fill="#000" textLength="32" lengthAdjust="spacingAndGlyphs" >20MHz</text>
<rect x="532" y="665" width="747" height="21" fill="#f0f0f0" />
<rect x="540" y="667" width="81" height="1" fill="#a0a0a0" />
<rect x="540" y="667" width="1" height="17" fill="#a0a0a0" />
<rect x="540" y="683" width="81" height="1" fill="#ffffff" />
<rect x="620" y="667" width="1" height="17" fill="#ffffff" />
<rect x="628" y="667" width="81" height="1" fill="#a0a0a0" />
<rect x="628" y="667" width="1" height="17" fill="#a0a0a0" />
<rect x="628" y="683" width="81" height="1" fill="#ffffff" />
<rect x="708" y="667" width="1" height="17" fill="#ffffff" />
<rect x="716" y="667" width="81" height="1" fill="#a0a0a0" />
<rect x="716" y="667" width="1" height="17" fill="#a0a0a0" />
<rect x="716" y="683" width="81" height="1" fill="#ffffff" />
<rect x="796" y="667" width="1" height="17" fill="#ffffff" />
<text x="543" y="680" font-size="11" fill="#000" textLength="64" lengthAdjust="spacingAndGlyphs" >f=13.555MHz</text>
<circle cx="636.5" cy="675.5" r="4.5" fill="#ff0000" stroke="#a00" stroke-width=".5"/>
<text x="645" y="680" font-size="11" fill="#000" textLength="15" lengthAdjust="spacingAndGlyphs" >0.4</text>
<circle cx="724.5" cy="675.5" r="4.5" fill="#ff0000" stroke="#a00" stroke-width=".5"/>
<text x="733" y="680" font-size="11" fill="#000" textLength="50" lengthAdjust="spacingAndGlyphs" >-178.6Deg</text>
<defs><pattern id="dith" width="2" height="2" patternUnits="userSpaceOnUse"><rect width="2" height="2" fill="#fcfcfc"/><rect width="1" height="1" fill="#e6e6e6"/><rect x="1" y="1" width="1" height="1" fill="#e6e6e6"/></pattern><pattern id="dith2" width="2" height="2" patternUnits="userSpaceOnUse"><rect width="2" height="2" fill="#fff"/><rect width="1" height="1" fill="#555"/><rect x="1" y="1" width="1" height="1" fill="#555"/></pattern></defs>
<rect x="803" y="665" width="476" height="1" fill="#ffffff" />
<rect x="803" y="666" width="460" height="19" fill="url(#dith)" />
<rect x="803" y="666" width="460" height="1" fill="#a0a0a0" />
<rect x="803" y="666" width="1" height="19" fill="#a0a0a0" />
<rect x="803" y="684" width="460" height="1" fill="#ffffff" />
<rect x="804" y="667" width="17" height="17" fill="#f0f0f0" />
<rect x="804" y="667" width="17" height="1" fill="#ffffff" />
<rect x="804" y="667" width="1" height="17" fill="#ffffff" />
<rect x="804" y="683" width="17" height="1" fill="#696969" />
<rect x="820" y="667" width="1" height="17" fill="#696969" />
<rect x="805" y="682" width="15" height="1" fill="#a0a0a0" />
<rect x="819" y="668" width="1" height="15" fill="#a0a0a0" />
<path d="M813 671.5V679.5L808.5 675.5Z" fill="#000"/>
<rect x="1245" y="667" width="17" height="17" fill="#f0f0f0" />
<rect x="1245" y="667" width="17" height="1" fill="#ffffff" />
<rect x="1245" y="667" width="1" height="17" fill="#ffffff" />
<rect x="1245" y="683" width="17" height="1" fill="#696969" />
<rect x="1261" y="667" width="1" height="17" fill="#696969" />
<rect x="1246" y="682" width="15" height="1" fill="#a0a0a0" />
<rect x="1260" y="668" width="1" height="15" fill="#a0a0a0" />
<path d="M1252 671.5V679.5L1256.5 675.5Z" fill="#000"/>
<rect x="1000" y="667" width="17" height="17" fill="#f0f0f0" />
<rect x="1000" y="667" width="17" height="1" fill="#ffffff" />
<rect x="1000" y="667" width="1" height="17" fill="#ffffff" />
<rect x="1000" y="683" width="17" height="1" fill="#696969" />
<rect x="1016" y="667" width="1" height="17" fill="#696969" />
<rect x="1001" y="682" width="15" height="1" fill="#a0a0a0" />
<rect x="1015" y="668" width="1" height="15" fill="#a0a0a0" />
<rect x="1001" y="668" width="14" height="14" fill="url(#dith2)" />
<path d="M1276 686L1279 683V686Z" fill="#a0a0a0"/>
<rect x="1275" y="670" width="4" height="16" fill="#c8c8c8" />
<rect x="524" y="694" width="755" height="7" fill="#fff" />
<g fill="#777"><rect x="533" y="698" width="1" height="1"/><rect x="543" y="698" width="1" height="1"/><rect x="553" y="698" width="1" height="1"/><rect x="563" y="698" width="1" height="1"/><rect x="573" y="698" width="1" height="1"/></g>
<rect x="577" y="694" width="11" height="7" fill="url(#dith)" />
<rect x="588" y="694" width="7" height="7" fill="#f0f0f0" />
<rect x="707" y="694" width="11" height="7" fill="url(#dith)" />
<rect x="718" y="694" width="7" height="7" fill="#f0f0f0" />
<rect x="725" y="694" width="508" height="7" fill="#000" />
<rect x="1233" y="694" width="46" height="7" fill="#f0f0f0" />
<g stroke="#f00" stroke-width="1.1"><path d="M857 694.5L882 701"/><path d="M901 694.5L915 701"/><path d="M946 701L972 694.5"/><path d="M1041 701L1057 694.5"/></g>
<path d="M924.5 694V701M1065 701L1076 694.5M762 694.5L776 701" stroke="#808080"/>
<g fill="#000"><rect x="132" y="40" width="4" height="1"/><rect x="131" y="41" width="1" height="1"/><rect x="136" y="41" width="1" height="1"/><rect x="130" y="42" width="1" height="1"/><rect x="137" y="42" width="4" height="1"/><rect x="130" y="43" width="1" height="1"/><rect x="140" y="43" width="1" height="1"/><rect x="130" y="44" width="1" height="1"/><rect x="140" y="44" width="1" height="1"/><rect x="130" y="45" width="1" height="1"/><rect x="134" y="45" width="11" height="1"/><rect x="130" y="46" width="1" height="1"/><rect x="133" y="46" width="1" height="1"/><rect x="143" y="46" width="1" height="1"/><rect x="130" y="47" width="1" height="1"/><rect x="132" y="47" width="1" height="1"/><rect x="142" y="47" width="1" height="1"/><rect x="130" y="48" width="2" height="1"/><rect x="141" y="48" width="1" height="1"/><rect x="131" y="49" width="10" height="1"/></g>
<g fill="#c0c0c0"><rect x="132" y="41" width="4" height="1"/><rect x="131" y="42" width="6" height="1"/><rect x="131" y="43" width="9" height="1"/><rect x="131" y="44" width="9" height="1"/><rect x="131" y="45" width="3" height="1"/><rect x="131" y="46" width="2" height="1"/><rect x="131" y="47" width="1" height="1"/></g>
<g fill="#808080"><rect x="134" y="46" width="9" height="1"/><rect x="133" y="47" width="9" height="1"/><rect x="132" y="48" width="9" height="1"/></g>
<g fill="#000"><rect x="153" y="38" width="14" height="1"/><rect x="152" y="39" width="3" height="1"/><rect x="164" y="39" width="4" height="1"/><rect x="152" y="40" width="3" height="1"/><rect x="164" y="40" width="1" height="1"/><rect x="166" y="40" width="2" height="1"/><rect x="152" y="41" width="3" height="1"/><rect x="164" y="41" width="4" height="1"/><rect x="152" y="42" width="3" height="1"/><rect x="164" y="42" width="4" height="1"/><rect x="152" y="43" width="3" height="1"/><rect x="164" y="43" width="4" height="1"/><rect x="152" y="44" width="3" height="1"/><rect x="164" y="44" width="4" height="1"/><rect x="152" y="45" width="3" height="1"/><rect x="164" y="45" width="4" height="1"/><rect x="152" y="46" width="16" height="1"/><rect x="152" y="47" width="16" height="1"/><rect x="152" y="48" width="5" height="1"/><rect x="164" y="48" width="4" height="1"/><rect x="152" y="49" width="5" height="1"/><rect x="159" y="49" width="2" height="1"/><rect x="164" y="49" width="4" height="1"/><rect x="152" y="50" width="5" height="1"/><rect x="159" y="50" width="2" height="1"/><rect x="164" y="50" width="4" height="1"/><rect x="152" y="51" width="5" height="1"/><rect x="164" y="51" width="4" height="1"/><rect x="152" y="52" width="5" height="1"/><rect x="164" y="52" width="4" height="1"/><rect x="153" y="53" width="14" height="1"/></g>
<g fill="#c0c0c0"><rect x="155" y="39" width="9" height="1"/><rect x="155" y="40" width="9" height="1"/><rect x="155" y="41" width="9" height="1"/><rect x="155" y="42" width="9" height="1"/><rect x="155" y="43" width="9" height="1"/><rect x="155" y="44" width="9" height="1"/><rect x="155" y="45" width="9" height="1"/></g>
<g fill="#ffffff"><rect x="165" y="40" width="1" height="1"/></g>
<g fill="#808080"><rect x="157" y="48" width="7" height="1"/><rect x="157" y="49" width="2" height="1"/><rect x="161" y="49" width="3" height="1"/><rect x="157" y="50" width="2" height="1"/><rect x="161" y="50" width="3" height="1"/><rect x="157" y="51" width="7" height="1"/><rect x="157" y="52" width="7" height="1"/></g>
<rect x="175" y="37" width="1" height="18" fill="#a0a0a0" />
<rect x="176" y="37" width="1" height="18" fill="#ffffff" />
<rect x="180" y="35" width="23" height="1" fill="#ffffff" />
<rect x="180" y="35" width="1" height="22" fill="#ffffff" />
<rect x="180" y="56" width="23" height="1" fill="#a0a0a0" />
<rect x="202" y="35" width="1" height="22" fill="#a0a0a0" />
<g fill="#000"><rect x="191" y="38" width="6" height="1"/><rect x="191" y="39" width="1" height="1"/><rect x="196" y="39" width="2" height="1"/><rect x="191" y="40" width="1" height="1"/><rect x="193" y="40" width="1" height="1"/><rect x="196" y="40" width="1" height="1"/><rect x="198" y="40" width="1" height="1"/><rect x="191" y="41" width="1" height="1"/><rect x="196" y="41" width="4" height="1"/><rect x="191" y="42" width="1" height="1"/><rect x="193" y="42" width="1" height="1"/><rect x="199" y="42" width="1" height="1"/><rect x="191" y="43" width="1" height="1"/><rect x="199" y="43" width="1" height="1"/><rect x="191" y="44" width="1" height="1"/><rect x="193" y="44" width="2" height="1"/><rect x="196" y="44" width="1" height="1"/><rect x="199" y="44" width="1" height="1"/><rect x="191" y="45" width="1" height="1"/><rect x="199" y="45" width="1" height="1"/><rect x="189" y="46" width="1" height="1"/><rect x="191" y="46" width="8" height="1"/><rect x="190" y="47" width="1" height="1"/><rect x="198" y="47" width="1" height="1"/><rect x="191" y="48" width="1" height="1"/><rect x="198" y="48" width="1" height="1"/><rect x="192" y="49" width="1" height="1"/><rect x="194" y="49" width="5" height="1"/><rect x="193" y="50" width="1" height="1"/><rect x="194" y="51" width="1" height="1"/><rect x="195" y="52" width="1" height="1"/></g>
<g fill="#ffffff"><rect x="192" y="39" width="4" height="1"/><rect x="192" y="40" width="1" height="1"/><rect x="194" y="40" width="2" height="1"/><rect x="197" y="40" width="1" height="1"/><rect x="192" y="41" width="4" height="1"/><rect x="187" y="42" width="1" height="1"/><rect x="192" y="42" width="1" height="1"/><rect x="194" y="42" width="5" height="1"/><rect x="192" y="43" width="7" height="1"/><rect x="192" y="44" width="1" height="1"/><rect x="195" y="44" width="1" height="1"/><rect x="197" y="44" width="2" height="1"/><rect x="192" y="45" width="7" height="1"/><rect x="191" y="47" width="1" height="1"/><rect x="194" y="47" width="4" height="1"/><rect x="192" y="48" width="6" height="1"/></g>
<g fill="#0000ff"><rect x="186" y="40" width="3" height="1"/><rect x="185" y="41" width="1" height="1"/><rect x="188" y="41" width="2" height="1"/><rect x="185" y="42" width="1" height="1"/><rect x="188" y="42" width="2" height="1"/><rect x="185" y="43" width="2" height="1"/><rect x="188" y="43" width="2" height="1"/><rect x="186" y="44" width="3" height="1"/><rect x="184" y="46" width="5" height="1"/><rect x="183" y="47" width="2" height="1"/><rect x="188" y="47" width="2" height="1"/><rect x="183" y="48" width="1" height="1"/><rect x="186" y="48" width="3" height="1"/><rect x="183" y="49" width="5" height="1"/><rect x="184" y="50" width="2" height="1"/></g>
<g fill="#c0c0c0"><rect x="192" y="47" width="2" height="1"/></g>
<g fill="#000"><rect x="206" y="38" width="6" height="1"/><rect x="206" y="39" width="1" height="1"/><rect x="211" y="39" width="2" height="1"/><rect x="214" y="39" width="5" height="1"/><rect x="206" y="40" width="1" height="1"/><rect x="208" y="40" width="1" height="1"/><rect x="211" y="40" width="1" height="1"/><rect x="213" y="40" width="1" height="1"/><rect x="216" y="40" width="4" height="1"/><rect x="206" y="41" width="1" height="1"/><rect x="211" y="41" width="1" height="1"/><rect x="214" y="41" width="1" height="1"/><rect x="217" y="41" width="3" height="1"/><rect x="206" y="42" width="1" height="1"/><rect x="208" y="42" width="2" height="1"/><rect x="211" y="42" width="5" height="1"/><rect x="217" y="42" width="4" height="1"/><rect x="206" y="43" width="1" height="1"/><rect x="215" y="43" width="7" height="1"/><rect x="206" y="44" width="1" height="1"/><rect x="208" y="44" width="4" height="1"/><rect x="213" y="44" width="1" height="1"/><rect x="215" y="44" width="6" height="1"/><rect x="206" y="45" width="1" height="1"/><rect x="215" y="45" width="1" height="1"/><rect x="217" y="45" width="3" height="1"/><rect x="206" y="46" width="1" height="1"/><rect x="208" y="46" width="2" height="1"/><rect x="211" y="46" width="3" height="1"/><rect x="215" y="46" width="7" height="1"/><rect x="206" y="47" width="1" height="1"/><rect x="215" y="47" width="3" height="1"/><rect x="221" y="47" width="1" height="1"/><rect x="206" y="48" width="1" height="1"/><rect x="215" y="48" width="3" height="1"/><rect x="221" y="48" width="1" height="1"/><rect x="206" y="49" width="10" height="1"/><rect x="217" y="49" width="3" height="1"/><rect x="221" y="49" width="1" height="1"/><rect x="212" y="50" width="1" height="1"/><rect x="221" y="50" width="1" height="1"/><rect x="212" y="51" width="1" height="1"/><rect x="221" y="51" width="1" height="1"/><rect x="212" y="52" width="1" height="1"/><rect x="221" y="52" width="1" height="1"/><rect x="212" y="53" width="1" height="1"/><rect x="221" y="53" width="1" height="1"/></g>
<g fill="#ffffff"><rect x="207" y="39" width="4" height="1"/><rect x="207" y="40" width="1" height="1"/><rect x="209" y="40" width="2" height="1"/><rect x="212" y="40" width="1" height="1"/><rect x="214" y="40" width="2" height="1"/><rect x="207" y="41" width="4" height="1"/><rect x="212" y="41" width="2" height="1"/><rect x="215" y="41" width="2" height="1"/><rect x="207" y="42" width="1" height="1"/><rect x="210" y="42" width="1" height="1"/><rect x="216" y="42" width="1" height="1"/><rect x="207" y="43" width="8" height="1"/><rect x="207" y="44" width="1" height="1"/><rect x="212" y="44" width="1" height="1"/><rect x="214" y="44" width="1" height="1"/><rect x="207" y="45" width="8" height="1"/><rect x="216" y="45" width="1" height="1"/><rect x="207" y="46" width="1" height="1"/><rect x="210" y="46" width="1" height="1"/><rect x="214" y="46" width="1" height="1"/><rect x="207" y="47" width="8" height="1"/><rect x="207" y="48" width="8" height="1"/></g>
<g fill="#c0c0c0"><rect x="218" y="47" width="2" height="1"/><rect x="218" y="48" width="2" height="1"/></g>
<g fill="#808080"><rect x="214" y="50" width="1" height="1"/><rect x="214" y="51" width="1" height="1"/><rect x="214" y="52" width="1" height="1"/><rect x="214" y="53" width="1" height="1"/></g>
<g fill="#000"><rect x="229" y="38" width="10" height="1"/><rect x="228" y="39" width="1" height="1"/><rect x="232" y="39" width="4" height="1"/><rect x="238" y="39" width="1" height="1"/><rect x="240" y="39" width="4" height="1"/><rect x="228" y="40" width="1" height="1"/><rect x="231" y="40" width="6" height="1"/><rect x="238" y="40" width="1" height="1"/><rect x="240" y="40" width="4" height="1"/><rect x="228" y="41" width="1" height="1"/><rect x="231" y="41" width="6" height="1"/><rect x="238" y="41" width="1" height="1"/><rect x="240" y="41" width="5" height="1"/><rect x="228" y="42" width="1" height="1"/><rect x="238" y="42" width="1" height="1"/><rect x="240" y="42" width="4" height="1"/><rect x="228" y="43" width="1" height="1"/><rect x="238" y="43" width="6" height="1"/><rect x="228" y="44" width="1" height="1"/><rect x="238" y="44" width="7" height="1"/><rect x="228" y="45" width="1" height="1"/><rect x="238" y="45" width="1" height="1"/><rect x="240" y="45" width="4" height="1"/><rect x="228" y="46" width="1" height="1"/><rect x="238" y="46" width="1" height="1"/><rect x="240" y="46" width="3" height="1"/><rect x="228" y="47" width="1" height="1"/><rect x="238" y="47" width="1" height="1"/><rect x="240" y="47" width="3" height="1"/><rect x="228" y="48" width="1" height="1"/><rect x="238" y="48" width="2" height="1"/><rect x="241" y="48" width="2" height="1"/><rect x="228" y="49" width="1" height="1"/><rect x="238" y="49" width="3" height="1"/><rect x="242" y="49" width="2" height="1"/><rect x="229" y="50" width="10" height="1"/><rect x="242" y="50" width="3" height="1"/><rect x="235" y="51" width="1" height="1"/><rect x="244" y="51" width="1" height="1"/><rect x="235" y="52" width="1" height="1"/><rect x="237" y="52" width="4" height="1"/><rect x="242" y="52" width="1" height="1"/><rect x="244" y="52" width="1" height="1"/><rect x="235" y="53" width="1" height="1"/><rect x="244" y="53" width="1" height="1"/></g>
<g fill="#c0c0c0"><rect x="229" y="39" width="3" height="1"/><rect x="236" y="39" width="2" height="1"/><rect x="229" y="40" width="2" height="1"/><rect x="237" y="40" width="1" height="1"/><rect x="229" y="41" width="2" height="1"/><rect x="237" y="41" width="1" height="1"/><rect x="229" y="42" width="2" height="1"/><rect x="236" y="42" width="2" height="1"/><rect x="229" y="43" width="2" height="1"/><rect x="236" y="43" width="2" height="1"/><rect x="229" y="44" width="2" height="1"/><rect x="236" y="44" width="2" height="1"/><rect x="229" y="45" width="2" height="1"/><rect x="236" y="45" width="2" height="1"/><rect x="229" y="46" width="2" height="1"/><rect x="236" y="46" width="2" height="1"/><rect x="229" y="47" width="9" height="1"/><rect x="229" y="48" width="9" height="1"/><rect x="229" y="49" width="9" height="1"/></g>
<g fill="#ffffff"><rect x="239" y="40" width="1" height="1"/><rect x="239" y="41" width="1" height="1"/><rect x="231" y="42" width="5" height="1"/><rect x="239" y="42" width="1" height="1"/><rect x="231" y="43" width="5" height="1"/><rect x="231" y="44" width="5" height="1"/><rect x="231" y="45" width="5" height="1"/><rect x="239" y="45" width="1" height="1"/><rect x="231" y="46" width="5" height="1"/><rect x="239" y="46" width="1" height="1"/><rect x="239" y="47" width="1" height="1"/><rect x="240" y="48" width="1" height="1"/><rect x="241" y="49" width="1" height="1"/></g>
<g fill="#000"><rect x="255" y="38" width="6" height="1"/><rect x="255" y="39" width="1" height="1"/><rect x="260" y="39" width="2" height="1"/><rect x="255" y="40" width="1" height="1"/><rect x="257" y="40" width="1" height="1"/><rect x="260" y="40" width="1" height="1"/><rect x="262" y="40" width="1" height="1"/><rect x="255" y="41" width="1" height="1"/><rect x="260" y="41" width="1" height="1"/><rect x="263" y="41" width="1" height="1"/><rect x="255" y="42" width="1" height="1"/><rect x="257" y="42" width="2" height="1"/><rect x="260" y="42" width="5" height="1"/><rect x="255" y="43" width="1" height="1"/><rect x="264" y="43" width="1" height="1"/><rect x="255" y="44" width="1" height="1"/><rect x="257" y="44" width="4" height="1"/><rect x="262" y="44" width="1" height="1"/><rect x="264" y="44" width="1" height="1"/><rect x="255" y="45" width="1" height="1"/><rect x="264" y="45" width="1" height="1"/><rect x="252" y="46" width="16" height="1"/><rect x="252" y="47" width="1" height="1"/><rect x="267" y="47" width="1" height="1"/><rect x="252" y="48" width="1" height="1"/><rect x="265" y="48" width="1" height="1"/><rect x="267" y="48" width="1" height="1"/><rect x="252" y="49" width="1" height="1"/><rect x="267" y="49" width="1" height="1"/><rect x="252" y="50" width="16" height="1"/><rect x="252" y="51" width="1" height="1"/><rect x="267" y="51" width="1" height="1"/><rect x="252" y="52" width="1" height="1"/><rect x="267" y="52" width="1" height="1"/><rect x="253" y="53" width="14" height="1"/></g>
<g fill="#ffffff"><rect x="256" y="39" width="4" height="1"/><rect x="256" y="40" width="1" height="1"/><rect x="258" y="40" width="2" height="1"/><rect x="261" y="40" width="1" height="1"/><rect x="256" y="41" width="4" height="1"/><rect x="261" y="41" width="2" height="1"/><rect x="256" y="42" width="1" height="1"/><rect x="259" y="42" width="1" height="1"/><rect x="256" y="43" width="8" height="1"/><rect x="256" y="44" width="1" height="1"/><rect x="261" y="44" width="1" height="1"/><rect x="263" y="44" width="1" height="1"/><rect x="256" y="45" width="8" height="1"/><rect x="253" y="47" width="1" height="1"/><rect x="255" y="47" width="1" height="1"/><rect x="257" y="47" width="1" height="1"/><rect x="259" y="47" width="1" height="1"/><rect x="261" y="47" width="1" height="1"/><rect x="263" y="47" width="1" height="1"/><rect x="265" y="47" width="1" height="1"/><rect x="254" y="48" width="1" height="1"/><rect x="256" y="48" width="1" height="1"/><rect x="258" y="48" width="1" height="1"/><rect x="260" y="48" width="1" height="1"/><rect x="262" y="48" width="1" height="1"/><rect x="266" y="48" width="1" height="1"/><rect x="253" y="49" width="1" height="1"/><rect x="255" y="49" width="1" height="1"/><rect x="257" y="49" width="1" height="1"/><rect x="259" y="49" width="1" height="1"/><rect x="261" y="49" width="1" height="1"/><rect x="263" y="49" width="1" height="1"/><rect x="265" y="49" width="1" height="1"/></g>
<g fill="#e0e0e0"><rect x="254" y="47" width="1" height="1"/><rect x="256" y="47" width="1" height="1"/><rect x="258" y="47" width="1" height="1"/><rect x="260" y="47" width="1" height="1"/><rect x="262" y="47" width="1" height="1"/><rect x="264" y="47" width="1" height="1"/><rect x="266" y="47" width="1" height="1"/><rect x="253" y="48" width="1" height="1"/><rect x="255" y="48" width="1" height="1"/><rect x="257" y="48" width="1" height="1"/><rect x="259" y="48" width="1" height="1"/><rect x="261" y="48" width="1" height="1"/><rect x="263" y="48" width="2" height="1"/><rect x="254" y="49" width="1" height="1"/><rect x="256" y="49" width="1" height="1"/><rect x="258" y="49" width="1" height="1"/><rect x="260" y="49" width="1" height="1"/><rect x="262" y="49" width="1" height="1"/><rect x="264" y="49" width="1" height="1"/><rect x="266" y="49" width="1" height="1"/></g>
<g fill="#c0c0c0"><rect x="253" y="51" width="14" height="1"/><rect x="253" y="52" width="14" height="1"/></g>
<rect x="275" y="37" width="1" height="18" fill="#a0a0a0" />
<rect x="276" y="37" width="1" height="18" fill="#ffffff" />
<g fill="#000"><rect x="297" y="38" width="1" height="1"/><rect x="296" y="39" width="1" height="1"/><rect x="286" y="40" width="1" height="1"/><rect x="295" y="40" width="1" height="1"/><rect x="294" y="41" width="1" height="1"/><rect x="287" y="42" width="1" height="1"/><rect x="293" y="42" width="1" height="1"/><rect x="295" y="42" width="1" height="1"/><rect x="292" y="43" width="1" height="1"/><rect x="294" y="43" width="1" height="1"/><rect x="296" y="43" width="1" height="1"/><rect x="298" y="43" width="1" height="1"/><rect x="285" y="44" width="2" height="1"/><rect x="288" y="44" width="1" height="1"/><rect x="291" y="44" width="2" height="1"/><rect x="294" y="44" width="1" height="1"/><rect x="296" y="44" width="1" height="1"/><rect x="298" y="44" width="1" height="1"/><rect x="284" y="45" width="2" height="1"/><rect x="287" y="45" width="1" height="1"/><rect x="290" y="45" width="4" height="1"/><rect x="295" y="45" width="1" height="1"/><rect x="297" y="45" width="1" height="1"/><rect x="284" y="46" width="2" height="1"/><rect x="289" y="46" width="6" height="1"/><rect x="296" y="46" width="1" height="1"/><rect x="287" y="47" width="1" height="1"/><rect x="289" y="47" width="6" height="1"/><rect x="285" y="48" width="3" height="1"/><rect x="290" y="48" width="4" height="1"/><rect x="284" y="49" width="2" height="1"/><rect x="287" y="49" width="1" height="1"/><rect x="291" y="49" width="2" height="1"/><rect x="283" y="50" width="2" height="1"/><rect x="287" y="50" width="2" height="1"/><rect x="292" y="50" width="1" height="1"/><rect x="283" y="51" width="1" height="1"/><rect x="287" y="51" width="2" height="1"/><rect x="294" y="51" width="1" height="1"/><rect x="283" y="52" width="7" height="1"/><rect x="284" y="53" width="4" height="1"/><rect x="289" y="53" width="3" height="1"/></g>
<g fill="#808080"><rect x="297" y="39" width="2" height="1"/><rect x="297" y="40" width="2" height="1"/><rect x="296" y="41" width="3" height="1"/><rect x="297" y="42" width="1" height="1"/></g>
<g fill="#e0e0e0"><rect x="296" y="40" width="1" height="1"/><rect x="295" y="41" width="1" height="1"/><rect x="296" y="42" width="1" height="1"/></g>
<g fill="#ffffff"><rect x="294" y="42" width="1" height="1"/><rect x="293" y="43" width="1" height="1"/><rect x="295" y="43" width="1" height="1"/><rect x="297" y="43" width="1" height="1"/><rect x="295" y="44" width="1" height="1"/><rect x="297" y="44" width="1" height="1"/><rect x="294" y="45" width="1" height="1"/><rect x="296" y="45" width="1" height="1"/><rect x="295" y="46" width="1" height="1"/><rect x="286" y="49" width="1" height="1"/><rect x="285" y="50" width="2" height="1"/><rect x="284" y="51" width="3" height="1"/></g>
<g fill="#000"><rect x="314" y="40" width="1" height="1"/><rect x="314" y="41" width="2" height="1"/><rect x="313" y="42" width="4" height="1"/><rect x="313" y="43" width="4" height="1"/><rect x="312" y="44" width="2" height="1"/><rect x="315" y="44" width="3" height="1"/><rect x="312" y="45" width="1" height="1"/><rect x="315" y="45" width="3" height="1"/><rect x="312" y="46" width="1" height="1"/><rect x="315" y="46" width="3" height="1"/><rect x="311" y="47" width="1" height="1"/><rect x="315" y="47" width="3" height="1"/><rect x="311" y="48" width="7" height="1"/><rect x="311" y="49" width="1" height="1"/><rect x="316" y="49" width="3" height="1"/><rect x="311" y="50" width="1" height="1"/><rect x="316" y="50" width="3" height="1"/><rect x="310" y="51" width="3" height="1"/><rect x="315" y="51" width="5" height="1"/></g>
<g fill="#ffffff"><rect x="313" y="45" width="1" height="1"/><rect x="313" y="46" width="2" height="1"/><rect x="312" y="47" width="3" height="1"/></g>
<path d="M330.5 39.5L343 52" fill="none" stroke="#000" stroke-width="4.3" />
<path d="M333 42L341.5 50.5" fill="none" stroke="#9a9a9a" stroke-width="1.5" stroke-dasharray="1 .5"/>
<rect x="329" y="38" width="4" height="3" fill="#000" />
<rect x="332" y="53" width="2" height="1" fill="#888" />
<rect x="335" y="53" width="6" height="1" fill="#888" />
<rect x="352" y="37" width="1" height="18" fill="#a0a0a0" />
<rect x="353" y="37" width="1" height="18" fill="#ffffff" />
<rect x="362.5" y="38.5" width="10" height="15" rx="1.5" fill="#bdbdbd" stroke="#000"/>
<rect x="364" y="41" width="7" height="3" fill="#000" />
<g fill="#000"><rect x="364" y="45" width="1" height="1"/><rect x="364" y="47" width="1" height="1"/><rect x="364" y="49" width="1" height="1"/><rect x="364" y="51" width="1" height="1"/><rect x="366" y="45" width="1" height="1"/><rect x="366" y="47" width="1" height="1"/><rect x="366" y="49" width="1" height="1"/><rect x="366" y="51" width="1" height="1"/><rect x="368" y="45" width="1" height="1"/><rect x="368" y="47" width="1" height="1"/><rect x="368" y="49" width="1" height="1"/><rect x="368" y="51" width="1" height="1"/><rect x="370" y="45" width="1" height="1"/><rect x="370" y="47" width="1" height="1"/><rect x="370" y="49" width="1" height="1"/><rect x="370" y="51" width="1" height="1"/></g>
<g fill="#000"><rect x="388" y="40" width="1" height="1"/><rect x="390" y="40" width="1" height="1"/><rect x="392" y="40" width="1" height="1"/><rect x="387" y="41" width="1" height="1"/><rect x="389" y="41" width="1" height="1"/><rect x="391" y="41" width="1" height="1"/><rect x="393" y="41" width="1" height="1"/><rect x="385" y="42" width="3" height="1"/><rect x="389" y="42" width="1" height="1"/><rect x="391" y="42" width="1" height="1"/><rect x="393" y="42" width="5" height="1"/><rect x="395" y="43" width="1" height="1"/><rect x="395" y="44" width="1" height="1"/><rect x="393" y="45" width="5" height="1"/><rect x="393" y="47" width="5" height="1"/><rect x="395" y="48" width="1" height="1"/><rect x="395" y="49" width="1" height="1"/><rect x="395" y="50" width="1" height="1"/><rect x="394" y="51" width="3" height="1"/></g>
<g fill="#000"><rect x="412" y="40" width="4" height="1"/><rect x="408" y="41" width="4" height="1"/><rect x="416" y="41" width="4" height="1"/><rect x="409" y="42" width="1" height="1"/><rect x="412" y="42" width="4" height="1"/><rect x="418" y="42" width="1" height="1"/><rect x="409" y="43" width="1" height="1"/><rect x="418" y="43" width="1" height="1"/><rect x="408" y="44" width="3" height="1"/><rect x="417" y="44" width="3" height="1"/><rect x="408" y="45" width="1" height="1"/><rect x="410" y="45" width="1" height="1"/><rect x="417" y="45" width="1" height="1"/><rect x="419" y="45" width="1" height="1"/><rect x="408" y="46" width="1" height="1"/><rect x="410" y="46" width="1" height="1"/><rect x="417" y="46" width="1" height="1"/><rect x="419" y="46" width="1" height="1"/><rect x="408" y="47" width="3" height="1"/><rect x="417" y="47" width="3" height="1"/><rect x="409" y="48" width="1" height="1"/><rect x="418" y="48" width="1" height="1"/><rect x="409" y="49" width="1" height="1"/><rect x="418" y="49" width="1" height="1"/><rect x="408" y="50" width="3" height="1"/><rect x="417" y="50" width="3" height="1"/></g>
<rect x="431" y="40" width="12" height="12" fill="#f8f8f8" />
<g fill="#000"><rect x="430" y="39" width="14" height="1"/><rect x="430" y="40" width="1" height="1"/><rect x="443" y="40" width="1" height="1"/><rect x="429" y="41" width="2" height="1"/><rect x="434" y="41" width="2" height="1"/><rect x="438" y="41" width="1" height="1"/><rect x="443" y="41" width="2" height="1"/><rect x="430" y="42" width="1" height="1"/><rect x="433" y="42" width="1" height="1"/><rect x="436" y="42" width="2" height="1"/><rect x="443" y="42" width="1" height="1"/><rect x="430" y="43" width="1" height="1"/><rect x="436" y="43" width="1" height="1"/><rect x="439" y="43" width="1" height="1"/><rect x="443" y="43" width="1" height="1"/><rect x="430" y="44" width="1" height="1"/><rect x="435" y="44" width="1" height="1"/><rect x="437" y="44" width="2" height="1"/><rect x="443" y="44" width="1" height="1"/><rect x="430" y="45" width="1" height="1"/><rect x="443" y="45" width="1" height="1"/><rect x="430" y="46" width="1" height="1"/><rect x="434" y="46" width="2" height="1"/><rect x="443" y="46" width="1" height="1"/><rect x="430" y="47" width="1" height="1"/><rect x="433" y="47" width="1" height="1"/><rect x="436" y="47" width="1" height="1"/><rect x="443" y="47" width="1" height="1"/><rect x="430" y="48" width="1" height="1"/><rect x="436" y="48" width="1" height="1"/><rect x="439" y="48" width="1" height="1"/><rect x="443" y="48" width="1" height="1"/><rect x="430" y="49" width="1" height="1"/><rect x="437" y="49" width="2" height="1"/><rect x="443" y="49" width="1" height="1"/><rect x="429" y="50" width="2" height="1"/><rect x="443" y="50" width="2" height="1"/><rect x="430" y="51" width="1" height="1"/><rect x="443" y="51" width="1" height="1"/><rect x="430" y="52" width="14" height="1"/></g>
<g fill="#000"><rect x="536" y="38" width="6" height="1"/><rect x="536" y="39" width="1" height="1"/><rect x="541" y="39" width="2" height="1"/><rect x="536" y="40" width="1" height="1"/><rect x="538" y="40" width="1" height="1"/><rect x="541" y="40" width="1" height="1"/><rect x="543" y="40" width="1" height="1"/><rect x="536" y="41" width="1" height="1"/><rect x="541" y="41" width="1" height="1"/><rect x="544" y="41" width="1" height="1"/><rect x="536" y="42" width="1" height="1"/><rect x="538" y="42" width="2" height="1"/><rect x="541" y="42" width="5" height="1"/><rect x="536" y="43" width="1" height="1"/><rect x="545" y="43" width="1" height="1"/><rect x="536" y="44" width="1" height="1"/><rect x="538" y="44" width="4" height="1"/><rect x="543" y="44" width="1" height="1"/><rect x="536" y="45" width="1" height="1"/><rect x="544" y="45" width="2" height="1"/><rect x="536" y="46" width="1" height="1"/><rect x="538" y="46" width="2" height="1"/><rect x="541" y="46" width="2" height="1"/><rect x="544" y="46" width="1" height="1"/><rect x="551" y="46" width="1" height="1"/><rect x="536" y="47" width="1" height="1"/><rect x="544" y="47" width="1" height="1"/><rect x="551" y="47" width="1" height="1"/><rect x="536" y="48" width="1" height="1"/><rect x="544" y="48" width="1" height="1"/><rect x="551" y="48" width="1" height="1"/><rect x="536" y="49" width="9" height="1"/><rect x="546" y="49" width="6" height="1"/><rect x="544" y="50" width="8" height="1"/><rect x="544" y="51" width="2" height="1"/><rect x="549" y="51" width="3" height="1"/><rect x="544" y="52" width="2" height="1"/><rect x="547" y="52" width="1" height="1"/><rect x="549" y="52" width="3" height="1"/><rect x="544" y="53" width="8" height="1"/></g>
<g fill="#ffffff"><rect x="537" y="39" width="4" height="1"/><rect x="537" y="40" width="1" height="1"/><rect x="539" y="40" width="2" height="1"/><rect x="542" y="40" width="1" height="1"/><rect x="537" y="41" width="4" height="1"/><rect x="542" y="41" width="2" height="1"/><rect x="537" y="42" width="1" height="1"/><rect x="540" y="42" width="1" height="1"/><rect x="537" y="43" width="8" height="1"/><rect x="537" y="44" width="1" height="1"/><rect x="542" y="44" width="1" height="1"/><rect x="544" y="44" width="2" height="1"/><rect x="537" y="45" width="7" height="1"/><rect x="537" y="46" width="1" height="1"/><rect x="540" y="46" width="1" height="1"/><rect x="543" y="46" width="1" height="1"/><rect x="537" y="47" width="7" height="1"/><rect x="545" y="47" width="6" height="1"/><rect x="537" y="48" width="7" height="1"/><rect x="545" y="48" width="6" height="1"/><rect x="546" y="51" width="1" height="1"/><rect x="546" y="52" width="1" height="1"/></g>
<g fill="#ff0000"><rect x="544" y="39" width="5" height="1"/><rect x="544" y="40" width="5" height="1"/><rect x="545" y="41" width="4" height="1"/><rect x="546" y="42" width="4" height="1"/><rect x="546" y="43" width="6" height="1"/><rect x="546" y="44" width="5" height="1"/><rect x="547" y="45" width="3" height="1"/><rect x="548" y="46" width="1" height="1"/></g>
<g fill="#0000ff"><rect x="545" y="46" width="3" height="1"/><rect x="549" y="46" width="2" height="1"/></g>
<g fill="#c0c0c0"><rect x="547" y="51" width="2" height="1"/><rect x="548" y="52" width="1" height="1"/></g>
<rect x="561" y="37" width="1" height="18" fill="#a0a0a0" />
<rect x="562" y="37" width="1" height="18" fill="#ffffff" />
<g fill="#000"><rect x="574" y="38" width="6" height="1"/><rect x="574" y="39" width="1" height="1"/><rect x="579" y="39" width="2" height="1"/><rect x="574" y="40" width="1" height="1"/><rect x="576" y="40" width="1" height="1"/><rect x="579" y="40" width="1" height="1"/><rect x="581" y="40" width="1" height="1"/><rect x="574" y="41" width="1" height="1"/><rect x="579" y="41" width="1" height="1"/><rect x="582" y="41" width="1" height="1"/><rect x="574" y="42" width="1" height="1"/><rect x="576" y="42" width="2" height="1"/><rect x="579" y="42" width="5" height="1"/><rect x="574" y="43" width="1" height="1"/><rect x="583" y="43" width="1" height="1"/><rect x="574" y="44" width="1" height="1"/><rect x="576" y="44" width="4" height="1"/><rect x="581" y="44" width="1" height="1"/><rect x="583" y="44" width="1" height="1"/><rect x="574" y="45" width="1" height="1"/><rect x="583" y="45" width="1" height="1"/><rect x="571" y="46" width="16" height="1"/><rect x="571" y="47" width="1" height="1"/><rect x="586" y="47" width="1" height="1"/><rect x="571" y="48" width="1" height="1"/><rect x="584" y="48" width="1" height="1"/><rect x="586" y="48" width="1" height="1"/><rect x="571" y="49" width="1" height="1"/><rect x="586" y="49" width="1" height="1"/><rect x="571" y="50" width="16" height="1"/><rect x="571" y="51" width="1" height="1"/><rect x="586" y="51" width="1" height="1"/><rect x="571" y="52" width="1" height="1"/><rect x="586" y="52" width="1" height="1"/><rect x="572" y="53" width="14" height="1"/></g>
<g fill="#ffffff"><rect x="575" y="39" width="4" height="1"/><rect x="575" y="40" width="1" height="1"/><rect x="577" y="40" width="2" height="1"/><rect x="580" y="40" width="1" height="1"/><rect x="575" y="41" width="4" height="1"/><rect x="580" y="41" width="2" height="1"/><rect x="575" y="42" width="1" height="1"/><rect x="578" y="42" width="1" height="1"/><rect x="575" y="43" width="8" height="1"/><rect x="575" y="44" width="1" height="1"/><rect x="580" y="44" width="1" height="1"/><rect x="582" y="44" width="1" height="1"/><rect x="575" y="45" width="8" height="1"/><rect x="572" y="47" width="1" height="1"/><rect x="574" y="47" width="1" height="1"/><rect x="576" y="47" width="1" height="1"/><rect x="578" y="47" width="1" height="1"/><rect x="580" y="47" width="1" height="1"/><rect x="582" y="47" width="1" height="1"/><rect x="584" y="47" width="1" height="1"/><rect x="573" y="48" width="1" height="1"/><rect x="575" y="48" width="1" height="1"/><rect x="577" y="48" width="1" height="1"/><rect x="579" y="48" width="1" height="1"/><rect x="581" y="48" width="1" height="1"/><rect x="585" y="48" width="1" height="1"/><rect x="572" y="49" width="1" height="1"/><rect x="574" y="49" width="1" height="1"/><rect x="576" y="49" width="1" height="1"/><rect x="578" y="49" width="1" height="1"/><rect x="580" y="49" width="1" height="1"/><rect x="582" y="49" width="1" height="1"/><rect x="584" y="49" width="1" height="1"/></g>
<g fill="#e0e0e0"><rect x="573" y="47" width="1" height="1"/><rect x="575" y="47" width="1" height="1"/><rect x="577" y="47" width="1" height="1"/><rect x="579" y="47" width="1" height="1"/><rect x="581" y="47" width="1" height="1"/><rect x="583" y="47" width="1" height="1"/><rect x="585" y="47" width="1" height="1"/><rect x="572" y="48" width="1" height="1"/><rect x="574" y="48" width="1" height="1"/><rect x="576" y="48" width="1" height="1"/><rect x="578" y="48" width="1" height="1"/><rect x="580" y="48" width="1" height="1"/><rect x="582" y="48" width="1" height="1"/><rect x="573" y="49" width="1" height="1"/><rect x="575" y="49" width="1" height="1"/><rect x="577" y="49" width="1" height="1"/><rect x="579" y="49" width="1" height="1"/><rect x="581" y="49" width="1" height="1"/><rect x="583" y="49" width="1" height="1"/><rect x="585" y="49" width="1" height="1"/></g>
<g fill="#ff0000"><rect x="583" y="48" width="1" height="1"/></g>
<g fill="#c0c0c0"><rect x="572" y="51" width="14" height="1"/><rect x="572" y="52" width="14" height="1"/></g>
<rect x="594" y="37" width="1" height="18" fill="#a0a0a0" />
<rect x="595" y="37" width="1" height="18" fill="#ffffff" />
<g fill="#000"><rect x="602" y="39" width="13" height="1"/><rect x="602" y="40" width="1" height="1"/><rect x="614" y="40" width="1" height="1"/><rect x="602" y="41" width="1" height="1"/><rect x="614" y="41" width="1" height="1"/><rect x="602" y="42" width="1" height="1"/><rect x="614" y="42" width="1" height="1"/><rect x="602" y="43" width="1" height="1"/><rect x="614" y="43" width="1" height="1"/><rect x="602" y="44" width="1" height="1"/><rect x="614" y="44" width="1" height="1"/><rect x="602" y="45" width="1" height="1"/><rect x="614" y="45" width="1" height="1"/><rect x="602" y="46" width="1" height="1"/><rect x="614" y="46" width="1" height="1"/><rect x="602" y="47" width="1" height="1"/><rect x="614" y="47" width="1" height="1"/><rect x="602" y="48" width="1" height="1"/><rect x="614" y="48" width="1" height="1"/><rect x="602" y="49" width="1" height="1"/><rect x="614" y="49" width="1" height="1"/><rect x="602" y="50" width="1" height="1"/><rect x="614" y="50" width="1" height="1"/><rect x="602" y="51" width="13" height="1"/></g>
<g fill="#ffffff"><rect x="603" y="40" width="11" height="1"/><rect x="603" y="41" width="11" height="1"/><rect x="609" y="42" width="2" height="1"/><rect x="603" y="43" width="6" height="1"/><rect x="611" y="43" width="3" height="1"/><rect x="603" y="44" width="6" height="1"/><rect x="611" y="44" width="3" height="1"/><rect x="603" y="45" width="5" height="1"/><rect x="609" y="45" width="2" height="1"/><rect x="612" y="45" width="2" height="1"/><rect x="604" y="46" width="3" height="1"/><rect x="608" y="46" width="3" height="1"/><rect x="612" y="46" width="2" height="1"/><rect x="603" y="47" width="1" height="1"/><rect x="606" y="47" width="1" height="1"/><rect x="608" y="47" width="4" height="1"/><rect x="613" y="47" width="1" height="1"/><rect x="603" y="48" width="3" height="1"/><rect x="607" y="48" width="5" height="1"/><rect x="613" y="48" width="1" height="1"/><rect x="603" y="49" width="10" height="1"/><rect x="603" y="50" width="10" height="1"/></g>
<g fill="#ff0000"><rect x="603" y="42" width="6" height="1"/><rect x="609" y="43" width="1" height="1"/><rect x="610" y="44" width="1" height="1"/><rect x="611" y="45" width="1" height="1"/><rect x="611" y="46" width="1" height="1"/><rect x="612" y="47" width="1" height="1"/><rect x="612" y="48" width="1" height="1"/><rect x="613" y="49" width="1" height="1"/><rect x="613" y="50" width="1" height="1"/></g>
<g fill="#0000ff"><rect x="611" y="42" width="3" height="1"/><rect x="610" y="43" width="1" height="1"/><rect x="609" y="44" width="1" height="1"/><rect x="608" y="45" width="1" height="1"/><rect x="603" y="46" width="1" height="1"/><rect x="607" y="46" width="1" height="1"/><rect x="604" y="47" width="2" height="1"/><rect x="607" y="47" width="1" height="1"/><rect x="606" y="48" width="1" height="1"/></g>
<rect x="622" y="35" width="24" height="21" fill="url(#dith)" />
<rect x="622" y="35" width="24" height="1" fill="#a0a0a0" />
<rect x="622" y="35" width="1" height="21" fill="#a0a0a0" />
<rect x="622" y="55" width="24" height="1" fill="#ffffff" />
<rect x="645" y="35" width="1" height="21" fill="#ffffff" />
<g fill="#000"><rect x="632" y="40" width="5" height="1"/><rect x="630" y="41" width="2" height="1"/><rect x="634" y="41" width="1" height="1"/><rect x="637" y="41" width="2" height="1"/><rect x="629" y="42" width="1" height="1"/><rect x="634" y="42" width="1" height="1"/><rect x="639" y="42" width="1" height="1"/><rect x="629" y="43" width="1" height="1"/><rect x="635" y="43" width="1" height="1"/><rect x="639" y="43" width="1" height="1"/><rect x="628" y="44" width="1" height="1"/><rect x="635" y="44" width="1" height="1"/><rect x="640" y="44" width="1" height="1"/><rect x="628" y="45" width="1" height="1"/><rect x="636" y="45" width="2" height="1"/><rect x="640" y="45" width="1" height="1"/><rect x="628" y="46" width="13" height="1"/><rect x="628" y="47" width="1" height="1"/><rect x="636" y="47" width="2" height="1"/><rect x="640" y="47" width="1" height="1"/><rect x="628" y="48" width="1" height="1"/><rect x="635" y="48" width="1" height="1"/><rect x="640" y="48" width="1" height="1"/><rect x="629" y="49" width="1" height="1"/><rect x="635" y="49" width="1" height="1"/><rect x="639" y="49" width="1" height="1"/><rect x="629" y="50" width="1" height="1"/><rect x="634" y="50" width="1" height="1"/><rect x="639" y="50" width="1" height="1"/><rect x="630" y="51" width="2" height="1"/><rect x="634" y="51" width="1" height="1"/><rect x="637" y="51" width="2" height="1"/><rect x="632" y="52" width="5" height="1"/></g>
<g fill="#000"><rect x="656" y="39" width="5" height="1"/><rect x="654" y="40" width="2" height="1"/><rect x="658" y="40" width="1" height="1"/><rect x="661" y="40" width="2" height="1"/><rect x="653" y="41" width="1" height="1"/><rect x="663" y="41" width="1" height="1"/><rect x="652" y="42" width="1" height="1"/><rect x="658" y="42" width="1" height="1"/><rect x="664" y="42" width="1" height="1"/><rect x="652" y="43" width="1" height="1"/><rect x="656" y="43" width="1" height="1"/><rect x="660" y="43" width="1" height="1"/><rect x="664" y="43" width="1" height="1"/><rect x="652" y="44" width="1" height="1"/><rect x="664" y="44" width="1" height="1"/><rect x="652" y="45" width="2" height="1"/><rect x="655" y="45" width="1" height="1"/><rect x="658" y="45" width="1" height="1"/><rect x="661" y="45" width="1" height="1"/><rect x="663" y="45" width="2" height="1"/><rect x="652" y="46" width="1" height="1"/><rect x="664" y="46" width="1" height="1"/><rect x="652" y="47" width="1" height="1"/><rect x="656" y="47" width="1" height="1"/><rect x="660" y="47" width="1" height="1"/><rect x="664" y="47" width="1" height="1"/><rect x="652" y="48" width="1" height="1"/><rect x="658" y="48" width="1" height="1"/><rect x="664" y="48" width="1" height="1"/><rect x="653" y="49" width="1" height="1"/><rect x="663" y="49" width="1" height="1"/><rect x="654" y="50" width="2" height="1"/><rect x="658" y="50" width="1" height="1"/><rect x="661" y="50" width="2" height="1"/><rect x="656" y="51" width="5" height="1"/></g>
<g fill="#000"><rect x="676" y="40" width="16" height="1"/><rect x="676" y="41" width="1" height="1"/><rect x="691" y="41" width="1" height="1"/><rect x="676" y="42" width="1" height="1"/><rect x="691" y="42" width="1" height="1"/><rect x="676" y="43" width="1" height="1"/><rect x="691" y="43" width="1" height="1"/><rect x="676" y="44" width="1" height="1"/><rect x="678" y="44" width="2" height="1"/><rect x="681" y="44" width="2" height="1"/><rect x="684" y="44" width="2" height="1"/><rect x="687" y="44" width="3" height="1"/><rect x="691" y="44" width="1" height="1"/><rect x="676" y="45" width="1" height="1"/><rect x="691" y="45" width="1" height="1"/><rect x="676" y="46" width="1" height="1"/><rect x="678" y="46" width="2" height="1"/><rect x="681" y="46" width="2" height="1"/><rect x="684" y="46" width="2" height="1"/><rect x="687" y="46" width="3" height="1"/><rect x="691" y="46" width="1" height="1"/><rect x="676" y="47" width="1" height="1"/><rect x="691" y="47" width="1" height="1"/><rect x="676" y="48" width="1" height="1"/><rect x="678" y="48" width="2" height="1"/><rect x="681" y="48" width="2" height="1"/><rect x="684" y="48" width="2" height="1"/><rect x="687" y="48" width="3" height="1"/><rect x="691" y="48" width="1" height="1"/><rect x="676" y="49" width="1" height="1"/><rect x="691" y="49" width="1" height="1"/><rect x="676" y="50" width="1" height="1"/><rect x="678" y="50" width="2" height="1"/><rect x="681" y="50" width="2" height="1"/><rect x="684" y="50" width="2" height="1"/><rect x="687" y="50" width="3" height="1"/><rect x="691" y="50" width="1" height="1"/><rect x="676" y="51" width="1" height="1"/><rect x="691" y="51" width="1" height="1"/><rect x="676" y="52" width="16" height="1"/></g>
<g fill="#e0e0e0"><rect x="677" y="41" width="2" height="1"/><rect x="689" y="41" width="2" height="1"/></g>
<g fill="#0000ff"><rect x="679" y="41" width="10" height="1"/><rect x="677" y="42" width="14" height="1"/></g>
<g fill="#ffffff"><rect x="677" y="43" width="14" height="1"/><rect x="677" y="44" width="1" height="1"/><rect x="680" y="44" width="1" height="1"/><rect x="683" y="44" width="1" height="1"/><rect x="686" y="44" width="1" height="1"/><rect x="690" y="44" width="1" height="1"/><rect x="677" y="45" width="14" height="1"/><rect x="677" y="46" width="1" height="1"/><rect x="680" y="46" width="1" height="1"/><rect x="683" y="46" width="1" height="1"/><rect x="686" y="46" width="1" height="1"/><rect x="690" y="46" width="1" height="1"/><rect x="677" y="47" width="14" height="1"/><rect x="677" y="48" width="1" height="1"/><rect x="680" y="48" width="1" height="1"/><rect x="683" y="48" width="1" height="1"/><rect x="686" y="48" width="1" height="1"/><rect x="690" y="48" width="1" height="1"/><rect x="677" y="49" width="14" height="1"/><rect x="677" y="50" width="1" height="1"/><rect x="680" y="50" width="1" height="1"/><rect x="683" y="50" width="1" height="1"/><rect x="686" y="50" width="1" height="1"/><rect x="690" y="50" width="1" height="1"/><rect x="677" y="51" width="14" height="1"/></g>
<rect x="700" y="37" width="1" height="18" fill="#a0a0a0" />
<rect x="701" y="37" width="1" height="18" fill="#ffffff" />
<g fill="#000"><rect x="711" y="39" width="2" height="1"/><rect x="711" y="40" width="2" height="1"/><rect x="715" y="40" width="1" height="1"/><rect x="711" y="41" width="2" height="1"/><rect x="711" y="42" width="2" height="1"/><rect x="715" y="42" width="1" height="1"/><rect x="717" y="42" width="3" height="1"/><rect x="711" y="43" width="2" height="1"/><rect x="715" y="43" width="1" height="1"/><rect x="717" y="43" width="1" height="1"/><rect x="719" y="43" width="1" height="1"/><rect x="711" y="44" width="4" height="1"/><rect x="717" y="44" width="1" height="1"/><rect x="719" y="44" width="1" height="1"/></g>
<g fill="#000"><rect x="710" y="49" width="1" height="1"/><rect x="714" y="49" width="1" height="1"/><rect x="718" y="49" width="1" height="1"/><rect x="722" y="49" width="1" height="1"/><rect x="710" y="50" width="1" height="1"/><rect x="714" y="50" width="1" height="1"/><rect x="718" y="50" width="1" height="1"/><rect x="722" y="50" width="1" height="1"/><rect x="710" y="51" width="13" height="1"/></g>
<rect x="730" y="35" width="24" height="21" fill="url(#dith)" />
<rect x="730" y="35" width="24" height="1" fill="#a0a0a0" />
<rect x="730" y="35" width="1" height="21" fill="#a0a0a0" />
<rect x="730" y="55" width="24" height="1" fill="#ffffff" />
<rect x="753" y="35" width="1" height="21" fill="#ffffff" />
<g fill="#000"><rect x="737" y="40" width="2" height="1"/><rect x="737" y="41" width="2" height="1"/><rect x="737" y="42" width="2" height="1"/><rect x="742" y="42" width="1" height="1"/><rect x="746" y="42" width="2" height="1"/><rect x="737" y="43" width="2" height="1"/><rect x="741" y="43" width="1" height="1"/><rect x="743" y="43" width="1" height="1"/><rect x="745" y="43" width="1" height="1"/><rect x="747" y="43" width="1" height="1"/><rect x="737" y="44" width="2" height="1"/><rect x="741" y="44" width="1" height="1"/><rect x="743" y="44" width="1" height="1"/><rect x="745" y="44" width="1" height="1"/><rect x="747" y="44" width="1" height="1"/><rect x="737" y="45" width="3" height="1"/><rect x="742" y="45" width="1" height="1"/><rect x="746" y="45" width="2" height="1"/><rect x="747" y="46" width="1" height="1"/><rect x="745" y="47" width="2" height="1"/></g>
<g fill="#000"><rect x="736" y="50" width="1" height="1"/><rect x="739" y="50" width="1" height="1"/><rect x="748" y="50" width="1" height="1"/><rect x="736" y="51" width="1" height="1"/><rect x="739" y="51" width="1" height="1"/><rect x="748" y="51" width="1" height="1"/><rect x="736" y="52" width="13" height="1"/></g>
<rect x="758" y="37" width="1" height="18" fill="#a0a0a0" />
<rect x="759" y="37" width="1" height="18" fill="#ffffff" />
<path d="M774.5 39V52 M769.5 46.5L774.5 52L779.5 46.5" fill="none" stroke="#000" stroke-width="1.1" />
<rect x="788" y="35" width="24" height="21" fill="url(#dith)" />
<rect x="788" y="35" width="24" height="1" fill="#a0a0a0" />
<rect x="788" y="35" width="1" height="21" fill="#a0a0a0" />
<rect x="788" y="55" width="24" height="1" fill="#ffffff" />
<rect x="811" y="35" width="1" height="21" fill="#ffffff" />
<path d="M794.5 44.5L797.5 47.5L794.5 50.5 M806.5 44.5L803.5 47.5L806.5 50.5" fill="none" stroke="#000" stroke-width="1" />
<rect x="800" y="47" width="1" height="1" fill="#000" />
<path d="M824.5 52V39 M819.5 44.5L824.5 39L829.5 44.5" fill="none" stroke="#000" stroke-width="1.1" />
<g fill="#ff0000"><rect x="843" y="41" width="4" height="1"/><rect x="842" y="42" width="2" height="1"/><rect x="846" y="42" width="2" height="1"/><rect x="842" y="43" width="2" height="1"/><rect x="846" y="43" width="2" height="1"/><rect x="845" y="44" width="2" height="1"/><rect x="844" y="45" width="2" height="1"/><rect x="844" y="46" width="1" height="1"/><rect x="844" y="47" width="1" height="1"/><rect x="844" y="49" width="2" height="1"/><rect x="844" y="50" width="2" height="1"/></g>
<g fill="#0000ff"><rect x="852" y="39" width="2" height="1"/><rect x="851" y="40" width="1" height="1"/><rect x="851" y="41" width="1" height="1"/><rect x="851" y="42" width="1" height="1"/><rect x="851" y="43" width="1" height="1"/><rect x="850" y="44" width="1" height="1"/><rect x="849" y="45" width="1" height="1"/><rect x="850" y="46" width="1" height="1"/><rect x="851" y="47" width="1" height="1"/><rect x="851" y="48" width="1" height="1"/><rect x="851" y="49" width="1" height="1"/><rect x="851" y="50" width="1" height="1"/><rect x="851" y="51" width="1" height="1"/><rect x="852" y="52" width="2" height="1"/></g>
<g fill="#000"><rect x="855" y="39" width="3" height="1"/><rect x="855" y="40" width="3" height="1"/><rect x="856" y="42" width="2" height="1"/><rect x="856" y="43" width="2" height="1"/><rect x="856" y="45" width="2" height="1"/><rect x="856" y="46" width="2" height="1"/><rect x="856" y="48" width="2" height="1"/><rect x="856" y="49" width="2" height="1"/><rect x="855" y="51" width="3" height="1"/><rect x="855" y="52" width="3" height="1"/></g>
<defs><clipPath id="gclip"><rect x="866" y="38" width="18" height="17"/></clipPath></defs><g clip-path="url(#gclip)">
<circle cx="871.5" cy="42" r="3.3" fill="#a8a8a8" stroke="#000" stroke-width="1.5"/>
<path d="M874.55 43.25L876.31 43.98M872.77 45.05L873.50 46.80M870.25 45.05L869.52 46.81M868.45 43.27L866.70 44.00M868.45 40.75L866.69 40.02M870.23 38.95L869.50 37.20M872.75 38.95L873.48 37.19M874.55 40.73L876.30 40.00" stroke="#000" stroke-width="1.9"/>
<circle cx="871.5" cy="42" r="1.6" fill="#c0c0c0" stroke="#000" stroke-width="1"/><rect x="871" y="41.5" width="1" height="1" fill="#000"/>
<circle cx="884.5" cy="48.5" r="4.5" fill="#a8a8a8" stroke="#000" stroke-width="1.5"/>
<path d="M889.00 48.50L890.90 48.50M888.14 51.15L889.68 52.26M885.89 52.78L886.48 54.59M883.11 52.78L882.52 54.59M880.86 51.15L879.32 52.26M880.00 48.50L878.10 48.50M880.86 45.85L879.32 44.74M883.11 44.22L882.52 42.41M885.89 44.22L886.48 42.41M888.14 45.85L889.68 44.74" stroke="#000" stroke-width="1.8"/>
<circle cx="869.5" cy="52.5" r="3.2" fill="#a8a8a8" stroke="#000" stroke-width="1.5"/>
<path d="M872.46 53.72L874.12 54.40M870.73 55.45L871.43 57.11M868.28 55.46L867.60 57.12M866.55 53.73L864.89 54.43M866.54 51.28L864.88 50.60M868.27 49.55L867.57 47.89M870.72 49.54L871.40 47.88M872.45 51.27L874.11 50.57" stroke="#000" stroke-width="1.7"/>
</g>
<rect x="891" y="37" width="1" height="18" fill="#a0a0a0" />
<rect x="892" y="37" width="1" height="18" fill="#ffffff" />
<g fill="#000"><rect x="905" y="40" width="3" height="1"/><rect x="904" y="41" width="1" height="1"/><rect x="908" y="41" width="1" height="1"/><rect x="903" y="42" width="1" height="1"/><rect x="907" y="42" width="1" height="1"/><rect x="909" y="42" width="2" height="1"/><rect x="903" y="43" width="1" height="1"/><rect x="906" y="43" width="1" height="1"/><rect x="909" y="43" width="1" height="1"/><rect x="911" y="43" width="1" height="1"/><rect x="903" y="44" width="1" height="1"/><rect x="905" y="44" width="1" height="1"/><rect x="909" y="44" width="1" height="1"/><rect x="912" y="44" width="1" height="1"/><rect x="904" y="45" width="1" height="1"/><rect x="908" y="45" width="1" height="1"/><rect x="913" y="45" width="1" height="1"/><rect x="904" y="46" width="4" height="1"/><rect x="913" y="46" width="1" height="1"/><rect x="904" y="47" width="1" height="1"/><rect x="913" y="47" width="1" height="1"/><rect x="904" y="48" width="1" height="1"/><rect x="913" y="48" width="1" height="1"/><rect x="905" y="49" width="1" height="1"/><rect x="912" y="49" width="1" height="1"/><rect x="906" y="50" width="1" height="1"/><rect x="911" y="50" width="1" height="1"/><rect x="907" y="51" width="4" height="1"/></g>
<rect x="921" y="35" width="77" height="22" fill="#f0f0f0" />
<rect x="921" y="35" width="77" height="1" fill="#ffffff" />
<rect x="921" y="35" width="1" height="22" fill="#ffffff" />
<rect x="921" y="56" width="77" height="1" fill="#696969" />
<rect x="997" y="35" width="1" height="22" fill="#696969" />
<rect x="922" y="55" width="75" height="1" fill="#a0a0a0" />
<rect x="996" y="36" width="1" height="20" fill="#a0a0a0" />
<text x="932" y="51" font-size="11" fill="#000" textLength="56" lengthAdjust="spacingAndGlyphs" >Auto Match</text>
</svg></body></html>
